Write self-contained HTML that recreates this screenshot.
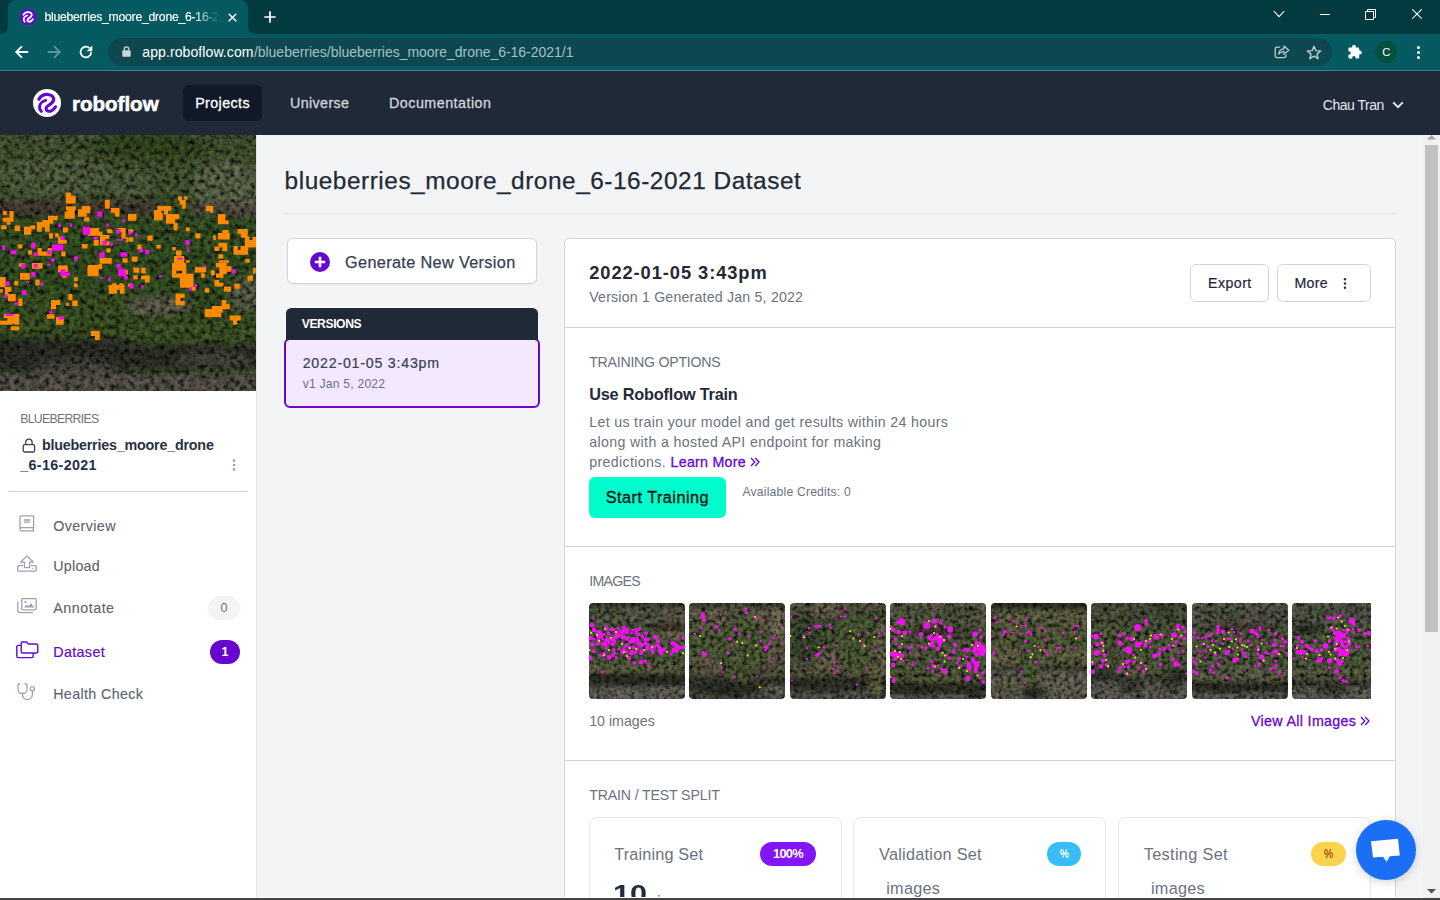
<!DOCTYPE html>
<html lang="en"><head><meta charset="utf-8"><title>blueberries_moore_drone_6-16-2021 Dataset</title>
<style>
*{box-sizing:border-box;margin:0;padding:0}
html,body{width:1440px;height:900px;overflow:hidden;background:#f3f4f6;font-family:"Liberation Sans",sans-serif}
#root{position:relative;width:1440px;height:900px;overflow:hidden;background:#f3f4f6}
.a{position:absolute}
.t{position:absolute;white-space:nowrap;display:block}
svg{position:absolute;overflow:visible}
.hr{position:absolute;height:1px;background:#d1d5db}
.btn{position:absolute;background:#fff;border:1px solid #d1d5db;border-radius:6px}
.card{position:absolute;background:#fff;border:1px solid #e5e7eb;border-radius:8px}
.pill{position:absolute;border-radius:12px;height:24px}
.th{position:absolute;top:603px;width:96px;height:96px;border-radius:4px;overflow:hidden}
</style></head>
<body><div id="root">
<div class="a" style="left:0;top:135px;width:257px;height:765px;background:#fff;border-right:1px solid #e5e7eb"></div>
<svg style="left:0;top:135px" width="256" height="256" viewBox="0 0 256 256"><defs><filter id="pf" x="0" y="0" width="100%" height="100%" color-interpolation-filters="sRGB"><feGaussianBlur in="SourceGraphic" stdDeviation="3.2" result="b"/><feTurbulence type="fractalNoise" baseFrequency="0.2" numOctaves="3" seed="7" result="n"/><feColorMatrix in="n" type="matrix" values="1.3 0 0 0 -0.15  1.3 0.08 0 0 -0.19  1.3 0 0.04 0 -0.17  0 0 0 0 1" result="g0"/><feComponentTransfer in="g0" result="g"><feFuncR type="table" tableValues="0 0.27 0.5 0.63 0.7"/><feFuncG type="table" tableValues="0 0.27 0.5 0.63 0.7"/><feFuncB type="table" tableValues="0 0.27 0.5 0.63 0.7"/></feComponentTransfer><feComposite in="b" in2="g" operator="arithmetic" k1="1.8" k2="0" k3="0" k4="0"/></filter><clipPath id="pc"><rect width="256" height="256"/></clipPath></defs><g clip-path="url(#pc)"><g filter="url(#pf)"><rect x="-20" y="-20" width="296" height="296" fill="#34461f"/><rect x="-20" y="-20" width="296" height="86" fill="#41502e"/><ellipse cx="55" cy="42" rx="60" ry="20" fill="#4d5a3a"/><ellipse cx="228" cy="52" rx="36" ry="26" fill="#566045"/><ellipse cx="150" cy="12" rx="60" ry="14" fill="#33451f"/><ellipse cx="130" cy="48" rx="30" ry="14" fill="#4a5738"/><rect x="-20" y="66" width="190" height="15" fill="#423930"/><rect x="170" y="69" width="100" height="13" fill="#514a3f"/><rect x="-20" y="84" width="296" height="76" fill="#334d21"/><rect x="-20" y="160" width="150" height="42" fill="#384e22"/><ellipse cx="76" cy="82" rx="15" ry="13" fill="#334d21"/><ellipse cx="172" cy="80" rx="20" ry="13" fill="#334d21"/><ellipse cx="214" cy="84" rx="14" ry="8" fill="#334d21"/><ellipse cx="112" cy="84" rx="10" ry="8" fill="#334d21"/><ellipse cx="158" cy="171" rx="34" ry="10" fill="#5b5a49"/><ellipse cx="246" cy="160" rx="16" ry="18" fill="#535842"/><rect x="120" y="184" width="150" height="24" fill="#3a5024"/><rect x="-20" y="204" width="150" height="32" fill="#2a2c24"/><rect x="120" y="210" width="150" height="24" fill="#2b2d25"/><rect x="-20" y="238" width="296" height="40" fill="#524e47"/><ellipse cx="75" cy="232" rx="40" ry="8" fill="#46443d"/><ellipse cx="215" cy="224" rx="40" ry="7" fill="#45433c"/></g><g fill="#ff8a00"><rect x="66.0" y="57.6" width="5.2" height="4.1"/><rect x="66.0" y="61.0" width="5.2" height="4.1"/><rect x="66.0" y="64.4" width="5.2" height="4.1"/><rect x="66.0" y="71.3" width="5.2" height="4.1"/><rect x="70.5" y="61.0" width="5.2" height="4.1"/><rect x="70.5" y="64.4" width="5.2" height="4.1"/><rect x="70.5" y="71.3" width="5.2" height="4.1"/><rect x="64.7" y="76.3" width="3.8" height="4.0"/><rect x="64.7" y="79.7" width="3.8" height="4.0"/><rect x="67.8" y="73.0" width="3.8" height="4.0"/><rect x="67.8" y="76.3" width="3.8" height="4.0"/><rect x="67.8" y="79.7" width="3.8" height="4.0"/><rect x="70.9" y="73.0" width="3.8" height="4.0"/><rect x="70.9" y="76.3" width="3.8" height="4.0"/><rect x="70.9" y="79.7" width="3.8" height="4.0"/><rect x="78.0" y="74.3" width="4.6" height="4.0"/><rect x="78.0" y="77.7" width="4.6" height="4.0"/><rect x="81.9" y="71.0" width="4.6" height="4.0"/><rect x="81.9" y="74.3" width="4.6" height="4.0"/><rect x="81.9" y="77.7" width="4.6" height="4.0"/><rect x="85.7" y="71.0" width="4.6" height="4.0"/><rect x="85.7" y="74.3" width="4.6" height="4.0"/><rect x="84.0" y="82.3" width="5.3" height="4.1" rx="0.7"/><rect x="105.0" y="64.7" width="4.7" height="4.9"/><rect x="105.0" y="68.8" width="4.7" height="4.9"/><rect x="111.0" y="73.0" width="4.6" height="4.7"/><rect x="114.9" y="73.0" width="4.6" height="4.7"/><rect x="114.9" y="77.0" width="4.6" height="4.7"/><rect x="2.8" y="76.0" width="4.0" height="4.0"/><rect x="2.8" y="82.7" width="4.0" height="4.0"/><rect x="6.1" y="82.7" width="4.0" height="4.0"/><rect x="9.5" y="76.0" width="4.0" height="4.0"/><rect x="9.5" y="79.3" width="4.0" height="4.0"/><rect x="9.5" y="82.7" width="4.0" height="4.0"/><rect x="6.7" y="87.0" width="3.8" height="2.8" rx="0.7"/><rect x="1.1" y="90.3" width="5.5" height="4.0" rx="0.7"/><rect x="14.6" y="90.4" width="5.6" height="5.6" rx="0.7"/><rect x="24.0" y="91.7" width="4.0" height="4.4"/><rect x="24.0" y="95.3" width="4.0" height="4.4"/><rect x="27.3" y="91.7" width="4.0" height="4.4"/><rect x="27.3" y="95.3" width="4.0" height="4.4"/><rect x="30.3" y="90.3" width="4.8" height="4.0" rx="0.7"/><rect x="37.0" y="87.0" width="4.7" height="5.2"/><rect x="37.0" y="91.5" width="4.7" height="5.2"/><rect x="41.0" y="87.0" width="4.7" height="5.2"/><rect x="45.0" y="87.0" width="4.7" height="5.2"/><rect x="45.0" y="91.5" width="4.7" height="5.2"/><rect x="42.4" y="84.9" width="6.2" height="3.9" rx="0.7"/><rect x="48.0" y="80.8" width="5.2" height="4.3"/><rect x="48.0" y="84.4" width="5.2" height="4.3"/><rect x="52.5" y="80.8" width="5.2" height="4.3"/><rect x="48.9" y="98.3" width="4.1" height="5.1" rx="0.7"/><rect x="55.1" y="98.2" width="3.7" height="4.0" rx="0.7"/><rect x="62.9" y="92.4" width="5.0" height="5.2" rx="0.7"/><rect x="58.0" y="101.7" width="4.7" height="3.9"/><rect x="58.0" y="104.8" width="4.7" height="3.9"/><rect x="62.0" y="104.8" width="4.7" height="3.9"/><rect x="88.0" y="93.0" width="4.1" height="4.2"/><rect x="88.0" y="96.5" width="4.1" height="4.2"/><rect x="91.4" y="93.0" width="4.1" height="4.2"/><rect x="91.4" y="96.5" width="4.1" height="4.2"/><rect x="94.8" y="93.0" width="4.1" height="4.2"/><rect x="94.8" y="96.5" width="4.1" height="4.2"/><rect x="98.3" y="96.5" width="4.1" height="4.2"/><rect x="107.1" y="94.2" width="5.5" height="4.0" rx="0.7"/><rect x="118.0" y="93.0" width="4.2" height="4.0"/><rect x="121.5" y="93.0" width="4.2" height="4.0"/><rect x="121.5" y="96.3" width="4.2" height="4.0"/><rect x="121.5" y="99.7" width="4.2" height="4.0"/><rect x="100.0" y="100.0" width="5.1" height="3.9"/><rect x="100.0" y="103.2" width="5.1" height="3.9"/><rect x="100.0" y="106.3" width="5.1" height="3.9"/><rect x="104.4" y="100.0" width="5.1" height="3.9"/><rect x="104.4" y="106.3" width="5.1" height="3.9"/><rect x="93.8" y="105.0" width="4.9" height="5.7"/><rect x="81.8" y="109.1" width="5.8" height="4.4" rx="0.7"/><rect x="106.3" y="113.3" width="4.4" height="4.2" rx="0.7"/><rect x="18.1" y="109.3" width="4.4" height="4.2" rx="0.7"/><rect x="28.0" y="115.3" width="4.1" height="4.2" rx="0.7"/><rect x="37.7" y="113.0" width="4.0" height="4.2"/><rect x="37.7" y="116.5" width="4.0" height="4.2"/><rect x="41.0" y="116.5" width="4.0" height="4.2"/><rect x="44.4" y="116.5" width="4.0" height="4.2"/><rect x="47.7" y="113.0" width="4.0" height="4.2"/><rect x="47.7" y="116.5" width="4.0" height="4.2"/><rect x="61.3" y="116.3" width="4.4" height="4.9" rx="0.7"/><rect x="99.6" y="123.0" width="4.5" height="5.7"/><rect x="103.4" y="123.0" width="4.5" height="5.7"/><rect x="107.2" y="123.0" width="4.5" height="5.7"/><rect x="122.4" y="123.3" width="5.3" height="4.4" rx="0.7"/><rect x="126.1" y="102.1" width="1.8" height="5.5" rx="0.7"/><rect x="178.1" y="61.3" width="3.7" height="4.4" rx="0.7"/><rect x="184.2" y="61.2" width="3.3" height="3.5" rx="0.7"/><rect x="179.5" y="65.0" width="3.5" height="4.7"/><rect x="182.2" y="65.0" width="3.5" height="4.7"/><rect x="182.2" y="69.0" width="3.5" height="4.7"/><rect x="154.0" y="75.0" width="4.0" height="4.7"/><rect x="157.3" y="71.0" width="4.0" height="4.7"/><rect x="157.3" y="75.0" width="4.0" height="4.7"/><rect x="160.7" y="71.0" width="4.0" height="4.7"/><rect x="164.0" y="71.0" width="4.0" height="4.7"/><rect x="164.0" y="75.0" width="4.0" height="4.7"/><rect x="167.4" y="71.0" width="4.0" height="4.7"/><rect x="154.0" y="78.0" width="4.7" height="4.0"/><rect x="154.0" y="81.3" width="4.7" height="4.0"/><rect x="158.0" y="78.0" width="4.7" height="4.0"/><rect x="158.0" y="81.3" width="4.7" height="4.0"/><rect x="166.0" y="79.0" width="4.9" height="5.2"/><rect x="166.0" y="83.5" width="4.9" height="5.2"/><rect x="170.2" y="79.0" width="4.9" height="5.2"/><rect x="170.2" y="83.5" width="4.9" height="5.2"/><rect x="174.3" y="79.0" width="4.9" height="5.2"/><rect x="173.5" y="88.0" width="4.0" height="4.0"/><rect x="173.5" y="91.3" width="4.0" height="4.0"/><rect x="206.0" y="70.8" width="4.0" height="5.4"/><rect x="209.3" y="70.8" width="4.0" height="5.4"/><rect x="210.2" y="75.2" width="2.6" height="3.1" rx="0.7"/><rect x="218.0" y="79.0" width="4.0" height="3.9"/><rect x="218.0" y="82.2" width="4.0" height="3.9"/><rect x="218.0" y="85.3" width="4.0" height="3.9"/><rect x="221.3" y="79.0" width="4.0" height="3.9"/><rect x="221.3" y="82.2" width="4.0" height="3.9"/><rect x="221.3" y="85.3" width="4.0" height="3.9"/><rect x="224.7" y="85.3" width="4.0" height="3.9"/><rect x="128.0" y="79.0" width="4.6" height="3.7"/><rect x="128.0" y="82.0" width="4.6" height="3.7"/><rect x="131.9" y="79.0" width="4.6" height="3.7"/><rect x="131.9" y="82.0" width="4.6" height="3.7"/><rect x="185.9" y="92.3" width="3.9" height="3.9" rx="0.7"/><rect x="195.3" y="98.3" width="5.1" height="5.1" rx="0.7"/><rect x="128.3" y="94.2" width="5.0" height="3.5" rx="0.7"/><rect x="128.3" y="102.3" width="5.0" height="4.4" rx="0.7"/><rect x="147.4" y="100.4" width="5.3" height="5.3" rx="0.7"/><rect x="237.5" y="94.0" width="3.9" height="4.7"/><rect x="240.7" y="94.0" width="3.9" height="4.7"/><rect x="240.7" y="98.0" width="3.9" height="4.7"/><rect x="243.8" y="94.0" width="3.9" height="4.7"/><rect x="243.8" y="98.0" width="3.9" height="4.7"/><rect x="218.0" y="98.0" width="4.4" height="3.6"/><rect x="218.0" y="100.9" width="4.4" height="3.6"/><rect x="221.7" y="98.0" width="4.4" height="3.6"/><rect x="221.7" y="100.9" width="4.4" height="3.6"/><rect x="225.3" y="98.0" width="4.4" height="3.6"/><rect x="225.3" y="100.9" width="4.4" height="3.6"/><rect x="222.4" y="94.9" width="6.2" height="3.9" rx="0.7"/><rect x="213.2" y="100.3" width="2.6" height="4.8" rx="0.7"/><rect x="245.0" y="101.7" width="4.4" height="4.0"/><rect x="245.0" y="105.0" width="4.4" height="4.0"/><rect x="245.0" y="108.4" width="4.4" height="4.0"/><rect x="248.7" y="105.0" width="4.4" height="4.0"/><rect x="248.7" y="108.4" width="4.4" height="4.0"/><rect x="252.3" y="101.7" width="4.4" height="4.0"/><rect x="252.3" y="105.0" width="4.4" height="4.0"/><rect x="252.3" y="108.4" width="4.4" height="4.0"/><rect x="233.5" y="111.0" width="4.2" height="4.7"/><rect x="233.5" y="115.0" width="4.2" height="4.7"/><rect x="237.0" y="115.0" width="4.2" height="4.7"/><rect x="240.5" y="111.0" width="4.2" height="4.7"/><rect x="240.5" y="115.0" width="4.2" height="4.7"/><rect x="244.0" y="111.0" width="4.2" height="4.7"/><rect x="244.0" y="115.0" width="4.2" height="4.7"/><rect x="214.5" y="111.6" width="4.7" height="4.5"/><rect x="218.5" y="107.8" width="4.7" height="4.5"/><rect x="218.5" y="119.2" width="4.7" height="4.5"/><rect x="222.4" y="107.8" width="4.7" height="4.5"/><rect x="222.4" y="111.6" width="4.7" height="4.5"/><rect x="137.3" y="109.4" width="4.4" height="5.3" rx="0.7"/><rect x="156.3" y="109.8" width="4.4" height="3.8" rx="0.7"/><rect x="172.1" y="111.9" width="3.7" height="3.3" rx="0.7"/><rect x="176.0" y="115.4" width="5.6" height="5.3" rx="0.7"/><rect x="174.0" y="121.0" width="3.9" height="4.2"/><rect x="174.0" y="124.5" width="3.9" height="4.2"/><rect x="177.2" y="121.0" width="3.9" height="4.2"/><rect x="177.2" y="124.5" width="3.9" height="4.2"/><rect x="180.3" y="121.0" width="3.9" height="4.2"/><rect x="180.3" y="124.5" width="3.9" height="4.2"/><rect x="185.9" y="125.2" width="3.9" height="2.6" rx="0.7"/><rect x="131.9" y="121.4" width="5.7" height="5.3" rx="0.7"/><rect x="218.7" y="125.2" width="10.3" height="2.6" rx="0.7"/><rect x="245.3" y="124.0" width="4.4" height="3.8" rx="0.7"/><rect x="18.9" y="128.2" width="6.2" height="3.5" rx="0.7"/><rect x="32.0" y="128.0" width="4.0" height="5.7"/><rect x="35.3" y="128.0" width="4.0" height="5.7"/><rect x="38.7" y="128.0" width="4.0" height="5.7"/><rect x="58.0" y="130.5" width="5.2" height="3.7"/><rect x="58.0" y="133.5" width="5.2" height="3.7"/><rect x="62.5" y="130.5" width="5.2" height="3.7"/><rect x="62.5" y="133.5" width="5.2" height="3.7"/><rect x="62.3" y="138.3" width="4.4" height="4.4" rx="0.7"/><rect x="87.5" y="130.0" width="4.2" height="4.2"/><rect x="87.5" y="133.5" width="4.2" height="4.2"/><rect x="87.5" y="137.0" width="4.2" height="4.2"/><rect x="91.0" y="130.0" width="4.2" height="4.2"/><rect x="91.0" y="133.5" width="4.2" height="4.2"/><rect x="91.0" y="137.0" width="4.2" height="4.2"/><rect x="94.5" y="130.0" width="4.2" height="4.2"/><rect x="94.5" y="133.5" width="4.2" height="4.2"/><rect x="94.5" y="137.0" width="4.2" height="4.2"/><rect x="98.3" y="129.0" width="3.9" height="5.0" rx="0.7"/><rect x="124.7" y="134.7" width="3.1" height="4.9" rx="0.7"/><rect x="20.0" y="138.0" width="5.2" height="3.7"/><rect x="20.0" y="141.0" width="5.2" height="3.7"/><rect x="24.5" y="138.0" width="5.2" height="3.7"/><rect x="24.5" y="141.0" width="5.2" height="3.7"/><rect x="0.0" y="142.0" width="5.7" height="3.9"/><rect x="0.0" y="145.2" width="5.7" height="3.9"/><rect x="0.0" y="148.3" width="5.7" height="3.9"/><rect x="14.3" y="146.1" width="4.0" height="4.4" rx="0.7"/><rect x="35.3" y="144.4" width="4.4" height="6.0" rx="0.7"/><rect x="74.0" y="142.3" width="3.8" height="4.2" rx="0.7"/><rect x="74.0" y="148.3" width="3.8" height="4.0" rx="0.7"/><rect x="108.8" y="150.0" width="4.5" height="4.7"/><rect x="108.8" y="154.0" width="4.5" height="4.7"/><rect x="112.5" y="150.0" width="4.5" height="4.7"/><rect x="112.5" y="154.0" width="4.5" height="4.7"/><rect x="116.3" y="150.0" width="4.5" height="4.7"/><rect x="120.0" y="150.0" width="4.5" height="4.7"/><rect x="120.0" y="154.0" width="4.5" height="4.7"/><rect x="112.3" y="148.2" width="4.4" height="2.6" rx="0.7"/><rect x="119.3" y="148.3" width="4.4" height="4.4" rx="0.7"/><rect x="0.2" y="153.9" width="2.5" height="3.9" rx="0.7"/><rect x="5.0" y="152.0" width="3.5" height="4.7"/><rect x="5.0" y="156.0" width="3.5" height="4.7"/><rect x="7.8" y="152.0" width="3.5" height="4.7"/><rect x="7.8" y="159.0" width="4.3" height="4.0"/><rect x="7.8" y="162.3" width="4.3" height="4.0"/><rect x="11.4" y="159.0" width="4.3" height="4.0"/><rect x="11.4" y="162.3" width="4.3" height="4.0"/><rect x="18.3" y="163.5" width="4.2" height="7.4" rx="0.7"/><rect x="68.3" y="159.0" width="4.2" height="6.2" rx="0.7"/><rect x="51.0" y="165.0" width="5.0" height="5.0"/><rect x="51.0" y="169.2" width="5.0" height="5.0"/><rect x="55.2" y="165.0" width="5.0" height="5.0"/><rect x="72.2" y="165.4" width="5.5" height="5.6" rx="0.7"/><rect x="66.2" y="167.7" width="2.6" height="3.4" rx="0.7"/><rect x="47.0" y="179.3" width="4.1" height="4.4"/><rect x="50.4" y="179.3" width="4.1" height="4.4"/><rect x="56.0" y="182.0" width="4.2" height="4.2"/><rect x="56.0" y="185.5" width="4.2" height="4.2"/><rect x="59.5" y="182.0" width="4.2" height="4.2"/><rect x="59.5" y="185.5" width="4.2" height="4.2"/><rect x="0.0" y="185.7" width="4.4" height="4.0"/><rect x="3.7" y="179.0" width="4.4" height="4.0"/><rect x="3.7" y="185.7" width="4.4" height="4.0"/><rect x="7.4" y="179.0" width="4.4" height="4.0"/><rect x="7.4" y="182.3" width="4.4" height="4.0"/><rect x="7.4" y="185.7" width="4.4" height="4.0"/><rect x="11.1" y="179.0" width="4.4" height="4.0"/><rect x="11.1" y="182.3" width="4.4" height="4.0"/><rect x="14.8" y="179.0" width="4.4" height="4.0"/><rect x="14.8" y="182.3" width="4.4" height="4.0"/><rect x="14.8" y="185.7" width="4.4" height="4.0"/><rect x="10.7" y="185.0" width="4.6" height="3.9"/><rect x="10.7" y="191.4" width="4.6" height="3.9"/><rect x="14.6" y="191.4" width="4.6" height="3.9"/><rect x="91.0" y="196.0" width="4.7" height="5.0"/><rect x="95.0" y="196.0" width="4.7" height="5.0"/><rect x="95.0" y="200.2" width="4.7" height="5.0"/><rect x="133.4" y="132.4" width="5.9" height="5.3" rx="0.7"/><rect x="141.3" y="132.4" width="4.2" height="6.2" rx="0.7"/><rect x="133.3" y="140.3" width="4.4" height="4.2" rx="0.7"/><rect x="141.0" y="140.5" width="4.7" height="3.9"/><rect x="145.0" y="140.5" width="4.7" height="3.9"/><rect x="145.0" y="143.7" width="4.7" height="3.9"/><rect x="128.2" y="148.2" width="3.1" height="3.5" rx="0.7"/><rect x="172.0" y="128.0" width="4.1" height="4.2"/><rect x="172.0" y="131.5" width="4.1" height="4.2"/><rect x="172.0" y="135.0" width="4.1" height="4.2"/><rect x="172.0" y="138.5" width="4.1" height="4.2"/><rect x="175.4" y="128.0" width="4.1" height="4.2"/><rect x="175.4" y="131.5" width="4.1" height="4.2"/><rect x="175.4" y="138.5" width="4.1" height="4.2"/><rect x="178.8" y="128.0" width="4.1" height="4.2"/><rect x="178.8" y="131.5" width="4.1" height="4.2"/><rect x="178.8" y="138.5" width="4.1" height="4.2"/><rect x="182.2" y="128.0" width="4.1" height="4.2"/><rect x="182.2" y="131.5" width="4.1" height="4.2"/><rect x="182.2" y="135.0" width="4.1" height="4.2"/><rect x="180.0" y="138.7" width="3.9" height="4.0"/><rect x="180.0" y="142.0" width="3.9" height="4.0"/><rect x="180.0" y="145.3" width="3.9" height="4.0"/><rect x="180.0" y="148.7" width="3.9" height="4.0"/><rect x="183.2" y="138.7" width="3.9" height="4.0"/><rect x="183.2" y="142.0" width="3.9" height="4.0"/><rect x="183.2" y="145.3" width="3.9" height="4.0"/><rect x="183.2" y="148.7" width="3.9" height="4.0"/><rect x="186.3" y="138.7" width="3.9" height="4.0"/><rect x="186.3" y="142.0" width="3.9" height="4.0"/><rect x="186.3" y="145.3" width="3.9" height="4.0"/><rect x="186.3" y="148.7" width="3.9" height="4.0"/><rect x="189.5" y="138.7" width="3.9" height="4.0"/><rect x="189.5" y="142.0" width="3.9" height="4.0"/><rect x="189.5" y="145.3" width="3.9" height="4.0"/><rect x="189.5" y="148.7" width="3.9" height="4.0"/><rect x="195.0" y="132.0" width="4.2" height="5.5"/><rect x="198.5" y="132.0" width="4.2" height="5.5"/><rect x="202.0" y="132.0" width="4.2" height="5.5"/><rect x="201.1" y="138.3" width="3.7" height="4.4" rx="0.7"/><rect x="210.8" y="135.3" width="4.0" height="5.1" rx="0.7"/><rect x="216.0" y="128.0" width="4.0" height="4.2"/><rect x="216.0" y="138.5" width="4.0" height="4.2"/><rect x="219.3" y="128.0" width="4.0" height="4.2"/><rect x="219.3" y="131.5" width="4.0" height="4.2"/><rect x="219.3" y="135.0" width="4.0" height="4.2"/><rect x="219.3" y="138.5" width="4.0" height="4.2"/><rect x="222.7" y="128.0" width="4.0" height="4.2"/><rect x="222.7" y="131.5" width="4.0" height="4.2"/><rect x="222.7" y="135.0" width="4.0" height="4.2"/><rect x="226.3" y="131.2" width="5.2" height="5.5" rx="0.7"/><rect x="253.1" y="132.4" width="2.7" height="6.2" rx="0.7"/><rect x="247.4" y="140.4" width="5.7" height="5.3" rx="0.7"/><rect x="214.5" y="144.8" width="4.7" height="3.7"/><rect x="214.5" y="147.8" width="4.7" height="3.7"/><rect x="218.6" y="147.8" width="4.7" height="3.7"/><rect x="234.4" y="148.4" width="5.3" height="5.3" rx="0.7"/><rect x="191.3" y="151.8" width="4.4" height="4.0" rx="0.7"/><rect x="204.8" y="153.3" width="4.3" height="4.4" rx="0.7"/><rect x="224.0" y="151.5" width="3.9" height="5.1"/><rect x="227.2" y="151.5" width="3.9" height="5.1"/><rect x="175.6" y="158.6" width="4.9" height="4.3"/><rect x="175.6" y="162.2" width="4.9" height="4.3"/><rect x="175.6" y="165.9" width="4.9" height="4.3"/><rect x="179.8" y="158.6" width="4.9" height="4.3"/><rect x="179.8" y="165.9" width="4.9" height="4.3"/><rect x="204.8" y="174.0" width="4.6" height="4.4"/><rect x="204.8" y="177.7" width="4.6" height="4.4"/><rect x="208.7" y="174.0" width="4.6" height="4.4"/><rect x="208.7" y="177.7" width="4.6" height="4.4"/><rect x="212.7" y="174.0" width="4.6" height="4.4"/><rect x="212.7" y="177.7" width="4.6" height="4.4"/><rect x="216.6" y="177.7" width="4.6" height="4.4"/><rect x="212.0" y="171.0" width="4.0" height="3.7"/><rect x="215.3" y="171.0" width="4.0" height="3.7"/><rect x="215.3" y="174.0" width="4.0" height="3.7"/><rect x="218.7" y="171.0" width="4.0" height="3.7"/><rect x="218.7" y="174.0" width="4.0" height="3.7"/><rect x="221.7" y="165.0" width="4.4" height="5.0"/><rect x="221.7" y="169.2" width="4.4" height="5.0"/><rect x="225.3" y="169.2" width="4.4" height="5.0"/><rect x="229.7" y="180.6" width="4.1" height="4.9"/><rect x="233.1" y="180.6" width="4.1" height="4.9"/><rect x="233.1" y="184.8" width="4.1" height="4.9"/><rect x="236.6" y="180.6" width="4.1" height="4.9"/></g><g fill="#f60af2"><rect x="97.3" y="76.4" width="5.0" height="5.3" rx="0.7"/><rect x="58.2" y="88.3" width="2.6" height="4.0" rx="0.7"/><rect x="69.9" y="88.3" width="2.5" height="4.0" rx="0.7"/><rect x="106.2" y="88.2" width="2.6" height="3.5" rx="0.7"/><rect x="83.0" y="91.7" width="4.0" height="4.3"/><rect x="83.0" y="95.3" width="4.0" height="4.3"/><rect x="86.3" y="91.7" width="4.0" height="4.3"/><rect x="86.3" y="95.3" width="4.0" height="4.3"/><rect x="116.3" y="94.2" width="4.4" height="4.4" rx="0.7"/><rect x="122.2" y="84.2" width="3.5" height="2.6" rx="0.7"/><rect x="60.3" y="101.2" width="4.4" height="3.5" rx="0.7"/><rect x="93.3" y="101.9" width="4.4" height="2.6" rx="0.7"/><rect x="102.3" y="105.8" width="4.4" height="4.0" rx="0.7"/><rect x="117.0" y="103.9" width="6.3" height="1.9" rx="0.7"/><rect x="31.3" y="107.4" width="4.2" height="6.0" rx="0.7"/><rect x="52.0" y="109.5" width="4.2" height="3.5"/><rect x="52.0" y="112.2" width="4.2" height="3.5"/><rect x="55.5" y="109.5" width="4.2" height="3.5"/><rect x="55.5" y="112.2" width="4.2" height="3.5"/><rect x="59.1" y="109.5" width="4.2" height="3.5"/><rect x="59.1" y="112.2" width="4.2" height="3.5"/><rect x="2.2" y="109.9" width="3.0" height="5.3" rx="0.7"/><rect x="10.4" y="115.3" width="6.0" height="4.0" rx="0.7"/><rect x="33.7" y="117.3" width="3.8" height="4.0" rx="0.7"/><rect x="47.3" y="115.3" width="4.0" height="4.2" rx="0.7"/><rect x="50.8" y="123.2" width="4.0" height="3.5" rx="0.7"/><rect x="74.0" y="121.3" width="3.8" height="4.4" rx="0.7"/><rect x="99.3" y="117.4" width="5.4" height="5.3" rx="0.7"/><rect x="120.5" y="117.3" width="7.0" height="4.4" rx="0.7"/><rect x="110.2" y="107.3" width="2.6" height="4.0" rx="0.7"/><rect x="128.2" y="96.2" width="3.5" height="3.5" rx="0.7"/><rect x="135.2" y="98.2" width="2.4" height="3.3" rx="0.7"/><rect x="185.3" y="105.3" width="4.4" height="4.4" rx="0.7"/><rect x="139.3" y="113.8" width="4.0" height="3.8" rx="0.7"/><rect x="145.1" y="114.8" width="4.2" height="4.4" rx="0.7"/><rect x="187.2" y="113.2" width="2.2" height="3.5" rx="0.7"/><rect x="177.8" y="122.7" width="4.7" height="2.1" rx="0.7"/><rect x="21.3" y="129.0" width="4.0" height="4.7" rx="0.7"/><rect x="33.7" y="129.0" width="3.8" height="3.8" rx="0.7"/><rect x="47.2" y="128.8" width="3.5" height="2.0" rx="0.7"/><rect x="60.5" y="134.4" width="5.0" height="3.8"/><rect x="60.5" y="137.4" width="5.0" height="3.8"/><rect x="64.8" y="137.4" width="5.0" height="3.8"/><rect x="116.3" y="129.0" width="4.4" height="3.8" rx="0.7"/><rect x="118.0" y="133.7" width="4.2" height="4.1"/><rect x="118.0" y="137.1" width="4.2" height="4.1"/><rect x="121.5" y="133.7" width="4.2" height="4.1"/><rect x="121.5" y="137.1" width="4.2" height="4.1"/><rect x="124.1" y="140.8" width="3.7" height="3.8" rx="0.7"/><rect x="99.8" y="142.1" width="3.0" height="1.8" rx="0.7"/><rect x="108.2" y="142.3" width="2.6" height="4.0" rx="0.7"/><rect x="31.3" y="136.8" width="4.2" height="4.8" rx="0.7"/><rect x="5.3" y="146.3" width="4.4" height="4.0" rx="0.7"/><rect x="26.1" y="145.9" width="3.5" height="1.9" rx="0.7"/><rect x="40.0" y="147.8" width="3.2" height="2.6" rx="0.7"/><rect x="21.9" y="155.3" width="4.5" height="4.8" rx="0.7"/><rect x="4.2" y="159.3" width="2.6" height="4.0" rx="0.7"/><rect x="14.3" y="167.2" width="4.0" height="2.6" rx="0.7"/><rect x="49.2" y="175.9" width="3.5" height="2.9" rx="0.7"/><rect x="5.5" y="178.7" width="7.9" height="2.2" rx="0.7"/><rect x="58.4" y="181.2" width="5.3" height="3.2" rx="0.7"/><rect x="231.8" y="134.3" width="4.0" height="4.4" rx="0.7"/><rect x="158.9" y="140.2" width="3.8" height="2.2" rx="0.7"/><rect x="129.7" y="148.4" width="4.0" height="5.3" rx="0.7"/><rect x="141.2" y="149.9" width="2.3" height="3.9" rx="0.7"/><rect x="189.2" y="152.2" width="2.6" height="3.5" rx="0.7"/><rect x="193.9" y="149.2" width="3.3" height="3.1" rx="0.7"/><rect x="202.9" y="130.2" width="2.5" height="2.6" rx="0.7"/></g></g></svg>
<span class="t " style="left:20.20px;top:410.77px;font-size:12.20px;line-height:16px;color:#6b7280;font-weight:400;letter-spacing:-0.643px;">BLUEBERRIES</span>
<svg style="left:22px;top:438px" width="14" height="15" viewBox="0 0 14 15"><rect x="1.2" y="6.6" width="11.4" height="7.4" rx="1.6" fill="none" stroke="#374151" stroke-width="1.3"/><path d="M3.7 6.6 V4.4 A3.2 3.2 0 0 1 10.1 4.4 V6.6" fill="none" stroke="#374151" stroke-width="1.3"/></svg>
<span class="t " style="left:41.90px;top:435.95px;font-size:14.30px;line-height:19px;color:#273142;font-weight:700;letter-spacing:-0.201px;">blueberries_moore_drone</span>
<span class="t " style="left:20.20px;top:455.85px;font-size:14.30px;line-height:19px;color:#273142;font-weight:700;letter-spacing:0.361px;">_6-16-2021</span>
<svg style="left:232px;top:459px" width="4" height="12" viewBox="0 0 4 12"><circle cx="2" cy="1.6" r="1.3" fill="#9ca3af"/><circle cx="2" cy="6" r="1.3" fill="#9ca3af"/><circle cx="2" cy="10.4" r="1.3" fill="#9ca3af"/></svg>
<div class="hr" style="left:8px;top:491px;width:240px;background:#d1d5db"></div>
<svg style="left:19px;top:515px" width="16" height="17" viewBox="0 0 16 17"><path d="M1 13.6 V2.4 A1.6 1.6 0 0 1 2.6 0.8 H14.6 V12.6 H2.7 A1.65 1.65 0 0 0 2.7 15.9 H15" fill="none" stroke="#9ca3af" stroke-width="1.3"/><path d="M14.3 12.6 V15.9" stroke="#9ca3af" stroke-width="1.3"/><path d="M4.8 5 H11.4 M4.8 7.2 H11.4" stroke="#9ca3af" stroke-width="1.3"/></svg>
<span class="t " style="left:53.20px;top:517.05px;font-size:14.30px;line-height:19px;color:#59636f;font-weight:400;letter-spacing:0.386px;-webkit-text-stroke:0.12px #59636f;">Overview</span>
<svg style="left:17px;top:555px" width="20" height="17" viewBox="0 0 20 17"><path d="M6 10.6 H1.9 A1.2 1.2 0 0 0 0.7 11.8 V15 A1.2 1.2 0 0 0 1.9 16.2 H18.1 A1.2 1.2 0 0 0 19.3 15 V11.8 A1.2 1.2 0 0 0 18.1 10.6 H14" fill="none" stroke="#9ca3af" stroke-width="1.3"/><path d="M10 0.9 L3.6 7.2 H7.4 V12.6 H12.6 V7.2 H16.4 Z" fill="none" stroke="#9ca3af" stroke-width="1.3" stroke-linejoin="round"/><circle cx="16" cy="13.5" r="0.8" fill="#9ca3af"/></svg>
<span class="t " style="left:53.20px;top:557.05px;font-size:14.30px;line-height:19px;color:#59636f;font-weight:400;letter-spacing:0.256px;-webkit-text-stroke:0.12px #59636f;">Upload</span>
<svg style="left:17px;top:598px" width="20" height="16" viewBox="0 0 20 16"><rect x="4.7" y="0.7" width="14.5" height="11.2" rx="1.4" fill="none" stroke="#9ca3af" stroke-width="1.3"/><path d="M0.8 3.4 V12.8 A1.8 1.8 0 0 0 2.6 14.6 H16" fill="none" stroke="#9ca3af" stroke-width="1.3"/><path d="M7 9.6 L10 6.6 L11.6 8.2 L14 5 L17.2 9.6 Z" fill="#9ca3af"/><circle cx="8.4" cy="4" r="1.1" fill="#9ca3af"/></svg>
<span class="t " style="left:53.20px;top:598.55px;font-size:14.30px;line-height:19px;color:#59636f;font-weight:400;letter-spacing:0.521px;-webkit-text-stroke:0.12px #59636f;">Annotate</span>
<div class="pill" style="left:208px;top:596px;width:32px;background:#f3f4f6"></div>
<span class="t " style="left:220.50px;top:599.83px;font-size:12.60px;line-height:16px;color:#6b7280;font-weight:400;">0</span>
<svg style="left:15.5px;top:641px" width="23" height="18" viewBox="0 0 23 18"><path d="M5.8 1 H10.4 L12.4 3 H20.2 A1.6 1.6 0 0 1 21.8 4.6 V10.4 A1.6 1.6 0 0 1 20.2 12 H6.8 A1.6 1.6 0 0 1 5.2 10.4 V2.6 A1.6 1.6 0 0 1 6.8 1 Z" fill="none" stroke="#6706ce" stroke-width="1.4" stroke-linejoin="round"/><path d="M5 4.4 H2.4 A1.6 1.6 0 0 0 0.8 6 V15 A1.6 1.6 0 0 0 2.4 16.6 H15.6 A1.6 1.6 0 0 0 17.2 15 V12.2" fill="none" stroke="#6706ce" stroke-width="1.4"/></svg>
<span class="t " style="left:53.20px;top:642.85px;font-size:14.30px;line-height:19px;color:#6706ce;font-weight:400;letter-spacing:0.370px;-webkit-text-stroke:0.20px #6706ce;">Dataset</span>
<div class="pill" style="left:210px;top:640px;width:30px;background:#6706ce"></div>
<span class="t " style="left:221.50px;top:643.83px;font-size:12.60px;line-height:16px;color:#ffffff;font-weight:700;">1</span>
<svg style="left:17px;top:683px" width="19" height="18" viewBox="0 0 19 18"><path d="M3.2 1 H1.8 A0.8 0.8 0 0 0 1 1.8 V6 A4.5 4.5 0 0 0 10 6 V1.8 A0.8 0.8 0 0 0 9.2 1 H7.6" fill="none" stroke="#9ca3af" stroke-width="1.3"/><path d="M5.4 10.6 V11.6 A5 5 0 0 0 15.4 11.6 V8" fill="none" stroke="#9ca3af" stroke-width="1.3"/><circle cx="15.4" cy="5.8" r="2.1" fill="none" stroke="#9ca3af" stroke-width="1.3"/></svg>
<span class="t " style="left:53.20px;top:684.55px;font-size:14.30px;line-height:19px;color:#59636f;font-weight:400;letter-spacing:0.360px;-webkit-text-stroke:0.12px #59636f;">Health Check</span>
<span class="t " style="left:284.60px;top:165.15px;font-size:24.40px;line-height:32px;color:#1f2937;font-weight:400;letter-spacing:0.532px;-webkit-text-stroke:0.25px #1f2937;">blueberries_moore_drone_6-16-2021 Dataset</span>
<div class="hr" style="left:284px;top:213px;width:1112px;background:#e0e2e6"></div>
<div class="btn" style="left:287px;top:238px;width:250px;height:46px;box-shadow:0 1px 2px rgba(0,0,0,.05)"></div>
<svg style="left:310px;top:251.5px" width="20" height="20" viewBox="0 0 20 20"><circle cx="10" cy="10" r="10" fill="#6706ce"/><path d="M10 4.8 V15.2 M4.8 10 H15.2" stroke="#fff" stroke-width="2.6" fill="none"/></svg>
<span class="t " style="left:345.00px;top:251.95px;font-size:16.30px;line-height:21px;color:#374151;font-weight:400;letter-spacing:0.337px;-webkit-text-stroke:0.25px #374151;">Generate New Version</span>
<div class="a" style="left:284px;top:338px;width:256px;height:70px;background:#f3e8ff;border:2px solid #6706ce;border-radius:6px"></div>
<div class="a" style="left:286px;top:307px;width:252px;height:33px;background:#1f2937;border-radius:6px 6px 0 0;border-top:1px solid #fff"></div>
<span class="t " style="left:301.70px;top:315.87px;font-size:12.20px;line-height:16px;color:#ffffff;font-weight:700;letter-spacing:-0.436px;">VERSIONS</span>
<span class="t " style="left:302.70px;top:354.18px;font-size:14.20px;line-height:18px;color:#374151;font-weight:400;letter-spacing:0.784px;-webkit-text-stroke:0.20px #374151;">2022-01-05 3:43pm</span>
<span class="t " style="left:302.70px;top:375.67px;font-size:12.20px;line-height:16px;color:#6b7280;font-weight:400;letter-spacing:0.189px;">v1 Jan 5, 2022</span>
<div class="a" style="left:564px;top:238px;width:832px;height:700px;background:#fff;border:1px solid #d1d5db;border-radius:5px"></div>
<span class="t " style="left:589.20px;top:260.66px;font-size:18.30px;line-height:24px;color:#1f2937;font-weight:700;letter-spacing:0.933px;">2022-01-05 3:43pm</span>
<span class="t " style="left:589.20px;top:287.98px;font-size:14.20px;line-height:18px;color:#6b7280;font-weight:400;letter-spacing:0.186px;">Version 1 Generated Jan 5, 2022</span>
<div class="btn" style="left:1190px;top:264px;width:79px;height:38px"></div>
<span class="t " style="left:1208.00px;top:274.08px;font-size:14.20px;line-height:18px;color:#1f2937;font-weight:400;letter-spacing:0.452px;-webkit-text-stroke:0.20px #1f2937;">Export</span>
<div class="btn" style="left:1277px;top:264px;width:94px;height:38px"></div>
<span class="t " style="left:1294.40px;top:274.08px;font-size:14.20px;line-height:18px;color:#1f2937;font-weight:400;letter-spacing:0.282px;-webkit-text-stroke:0.20px #1f2937;">More</span>
<svg style="left:1343px;top:277.5px" width="4" height="11" viewBox="0 0 4 11"><circle cx="2" cy="1.3" r="1.2" fill="#1f2937"/><circle cx="2" cy="5.5" r="1.2" fill="#1f2937"/><circle cx="2" cy="9.7" r="1.2" fill="#1f2937"/></svg>
<div class="hr" style="left:565px;top:327px;width:830px"></div>
<span class="t " style="left:589.20px;top:353.18px;font-size:14.20px;line-height:18px;color:#6b7280;font-weight:400;letter-spacing:-0.273px;">TRAINING OPTIONS</span>
<span class="t " style="left:589.20px;top:383.87px;font-size:16.25px;line-height:21px;color:#1f2937;font-weight:700;letter-spacing:-0.181px;">Use Roboflow Train</span>
<span class="t " style="left:589.20px;top:412.98px;font-size:14.20px;line-height:18px;color:#6b7280;font-weight:400;letter-spacing:0.333px;">Let us train your model and get results within 24 hours</span>
<span class="t " style="left:589.20px;top:432.88px;font-size:14.20px;line-height:18px;color:#6b7280;font-weight:400;letter-spacing:0.355px;">along with a hosted API endpoint for making</span>
<span class="t " style="left:589.20px;top:452.78px;font-size:14.20px;line-height:18px;color:#6b7280;font-weight:400;letter-spacing:0.362px;">predictions.</span>
<span class="t " style="left:670.60px;top:452.78px;font-size:14.20px;line-height:18px;color:#6706ce;font-weight:400;letter-spacing:0.265px;-webkit-text-stroke:0.30px #6706ce;">Learn More</span>
<svg style="left:750px;top:457px" width="10" height="10" viewBox="0 0 10 10"><path d="M1 1 L4.8 5 L1 9 M5.2 1 L9 5 L5.2 9" stroke="#6706ce" stroke-width="1.3" fill="none"/></svg>
<div class="a" style="left:589px;top:477px;width:137px;height:41px;border-radius:6px;background:#00fccd"></div>
<span class="t " style="left:605.80px;top:487.17px;font-size:16.25px;line-height:21px;color:#0b1512;font-weight:400;letter-spacing:0.473px;-webkit-text-stroke:0.35px #0b1512;">Start Training</span>
<span class="t " style="left:742.50px;top:484.17px;font-size:12.20px;line-height:16px;color:#6b7280;font-weight:400;letter-spacing:0.180px;">Available Credits: 0</span>
<div class="hr" style="left:565px;top:546px;width:830px"></div>
<span class="t " style="left:589.20px;top:572.08px;font-size:14.20px;line-height:18px;color:#6b7280;font-weight:400;letter-spacing:-0.727px;">IMAGES</span>
<svg width="0" height="0" style="left:0;top:0"><defs><filter id="tf0" x="0" y="0" width="96" height="96" color-interpolation-filters="sRGB" filterUnits="userSpaceOnUse"><feGaussianBlur in="SourceGraphic" stdDeviation="2.2" result="b"/><feTurbulence type="fractalNoise" baseFrequency="0.24" numOctaves="3" seed="4" result="n"/><feColorMatrix in="n" type="matrix" values="1.3 0 0 0 -0.15  1.3 0.08 0 0 -0.19  1.3 0 0.04 0 -0.17  0 0 0 0 1" result="g0"/><feComponentTransfer in="g0" result="g"><feFuncR type="table" tableValues="0 0.27 0.5 0.63 0.7"/><feFuncG type="table" tableValues="0 0.27 0.5 0.63 0.7"/><feFuncB type="table" tableValues="0 0.27 0.5 0.63 0.7"/></feComponentTransfer><feComposite in="b" in2="g" operator="arithmetic" k1="1.8" k2="0" k3="0" k4="0"/></filter><filter id="tf1" x="0" y="0" width="96" height="96" color-interpolation-filters="sRGB" filterUnits="userSpaceOnUse"><feGaussianBlur in="SourceGraphic" stdDeviation="2.2" result="b"/><feTurbulence type="fractalNoise" baseFrequency="0.24" numOctaves="3" seed="9" result="n"/><feColorMatrix in="n" type="matrix" values="1.3 0 0 0 -0.15  1.3 0.08 0 0 -0.19  1.3 0 0.04 0 -0.17  0 0 0 0 1" result="g0"/><feComponentTransfer in="g0" result="g"><feFuncR type="table" tableValues="0 0.27 0.5 0.63 0.7"/><feFuncG type="table" tableValues="0 0.27 0.5 0.63 0.7"/><feFuncB type="table" tableValues="0 0.27 0.5 0.63 0.7"/></feComponentTransfer><feComposite in="b" in2="g" operator="arithmetic" k1="1.8" k2="0" k3="0" k4="0"/></filter><filter id="tf2" x="0" y="0" width="96" height="96" color-interpolation-filters="sRGB" filterUnits="userSpaceOnUse"><feGaussianBlur in="SourceGraphic" stdDeviation="2.2" result="b"/><feTurbulence type="fractalNoise" baseFrequency="0.24" numOctaves="3" seed="15" result="n"/><feColorMatrix in="n" type="matrix" values="1.3 0 0 0 -0.15  1.3 0.08 0 0 -0.19  1.3 0 0.04 0 -0.17  0 0 0 0 1" result="g0"/><feComponentTransfer in="g0" result="g"><feFuncR type="table" tableValues="0 0.27 0.5 0.63 0.7"/><feFuncG type="table" tableValues="0 0.27 0.5 0.63 0.7"/><feFuncB type="table" tableValues="0 0.27 0.5 0.63 0.7"/></feComponentTransfer><feComposite in="b" in2="g" operator="arithmetic" k1="1.8" k2="0" k3="0" k4="0"/></filter><filter id="tf3" x="0" y="0" width="96" height="96" color-interpolation-filters="sRGB" filterUnits="userSpaceOnUse"><feGaussianBlur in="SourceGraphic" stdDeviation="2.2" result="b"/><feTurbulence type="fractalNoise" baseFrequency="0.24" numOctaves="3" seed="23" result="n"/><feColorMatrix in="n" type="matrix" values="1.3 0 0 0 -0.15  1.3 0.08 0 0 -0.19  1.3 0 0.04 0 -0.17  0 0 0 0 1" result="g0"/><feComponentTransfer in="g0" result="g"><feFuncR type="table" tableValues="0 0.27 0.5 0.63 0.7"/><feFuncG type="table" tableValues="0 0.27 0.5 0.63 0.7"/><feFuncB type="table" tableValues="0 0.27 0.5 0.63 0.7"/></feComponentTransfer><feComposite in="b" in2="g" operator="arithmetic" k1="1.8" k2="0" k3="0" k4="0"/></filter></defs></svg>
<div class="a" style="left:589px;top:603px;width:782px;height:96px;overflow:hidden">
<div class="th" style="left:0px;top:0"><svg style="left:0;top:0" width="96" height="96" viewBox="0 0 96 96"><g filter="url(#tf0)"><rect x="-12" y="-12" width="120" height="120" fill="#38392e"/><rect x="-12" y="-12.0" width="120" height="16.0" fill="#38392e"/><rect x="-12" y="4.0" width="120" height="16.0" fill="#585647"/><rect x="-12" y="20.0" width="120" height="40.0" fill="#475538"/><rect x="-12" y="60.0" width="120" height="11.0" fill="#55593b"/><rect x="-12" y="71.0" width="120" height="12.0" fill="#2b2c24"/><rect x="-12" y="83.0" width="120" height="25.0" fill="#605d55"/><ellipse cx="80.0" cy="24.0" rx="20.0" ry="4.0" fill="#3d352c"/><ellipse cx="82.0" cy="33.0" rx="16.0" ry="6.0" fill="#625c48"/><ellipse cx="20.0" cy="10.0" rx="16.0" ry="6.0" fill="#4a513a"/><ellipse cx="60.0" cy="12.0" rx="14.0" ry="5.0" fill="#4f5240"/><ellipse cx="30.0" cy="88.0" rx="30.0" ry="5.0" fill="#5e5c54"/><ellipse cx="75.0" cy="76.0" rx="20.0" ry="4.0" fill="#2a2b23"/></g><g fill="#f411f0"><circle cx="13.5" cy="69.0" r="1.6"/><circle cx="60.0" cy="63.0" r="1.6"/><circle cx="52.0" cy="59.0" r="2.2"/><circle cx="56.0" cy="58.0" r="1.8"/><circle cx="3.0" cy="22.0" r="2.5"/><circle cx="5.0" cy="27.0" r="2.2"/><circle cx="9.0" cy="29.0" r="2.2"/><circle cx="17.0" cy="24.0" r="1.8"/><circle cx="35.0" cy="25.0" r="2.2"/><circle cx="38.0" cy="29.0" r="2.2"/><circle cx="50.0" cy="26.0" r="2.0"/><circle cx="57.0" cy="30.0" r="2.0"/><circle cx="66.0" cy="34.0" r="2.3"/><circle cx="69.0" cy="38.0" r="2.0"/><circle cx="94.0" cy="35.0" r="1.8"/><circle cx="95.0" cy="44.0" r="2.0"/><circle cx="89.0" cy="45.0" r="2.0"/><circle cx="86.0" cy="42.0" r="1.8"/><circle cx="75.0" cy="46.0" r="1.8"/><circle cx="72.0" cy="49.0" r="2.2"/><circle cx="82.0" cy="51.0" r="1.6"/><circle cx="1.0" cy="55.0" r="2.4"/><circle cx="0.5" cy="64.0" r="1.2"/><circle cx="45.0" cy="60.0" r="1.8"/><circle cx="40.0" cy="55.0" r="2.0"/><circle cx="42.7" cy="48.6" r="2.0"/><circle cx="22.7" cy="26.8" r="1.7"/><circle cx="37.0" cy="28.9" r="1.3"/><circle cx="23.5" cy="41.0" r="2.2"/><circle cx="47.0" cy="37.0" r="1.5"/><circle cx="31.6" cy="32.8" r="1.4"/><circle cx="36.9" cy="48.7" r="1.9"/><circle cx="43.9" cy="38.3" r="2.3"/><circle cx="2.3" cy="34.8" r="2.1"/><circle cx="43.3" cy="50.9" r="1.3"/><circle cx="49.5" cy="40.4" r="2.1"/><circle cx="17.6" cy="37.2" r="2.1"/><circle cx="42.9" cy="36.0" r="1.7"/><circle cx="10.9" cy="28.4" r="1.3"/><circle cx="1.2" cy="34.8" r="1.9"/><circle cx="24.4" cy="26.2" r="1.8"/><circle cx="24.1" cy="51.9" r="1.8"/><circle cx="14.2" cy="52.3" r="1.6"/><circle cx="3.1" cy="41.4" r="2.1"/><circle cx="49.3" cy="31.8" r="1.5"/><circle cx="47.0" cy="27.5" r="2.0"/><circle cx="32.4" cy="28.6" r="1.7"/><circle cx="19.7" cy="37.0" r="1.9"/><circle cx="38.1" cy="35.0" r="2.0"/><circle cx="27.1" cy="34.6" r="1.3"/><circle cx="18.0" cy="35.8" r="1.5"/><circle cx="11.9" cy="31.1" r="2.0"/><circle cx="13.7" cy="36.2" r="1.2"/><circle cx="40.3" cy="44.6" r="1.8"/><circle cx="27.4" cy="32.8" r="1.6"/><circle cx="48.1" cy="36.1" r="2.0"/><circle cx="11.5" cy="31.2" r="1.7"/><circle cx="5.1" cy="36.3" r="1.4"/><circle cx="38.7" cy="25.7" r="1.3"/><circle cx="35.0" cy="47.6" r="1.3"/><circle cx="45.8" cy="49.9" r="1.3"/><circle cx="57.5" cy="46.3" r="1.6"/><circle cx="9.3" cy="37.2" r="1.6"/><circle cx="16.9" cy="42.0" r="1.8"/><circle cx="29.9" cy="46.1" r="1.4"/><circle cx="4.5" cy="48.0" r="1.9"/><circle cx="49.5" cy="38.8" r="1.5"/><circle cx="26.7" cy="33.2" r="2.3"/><circle cx="17.5" cy="45.3" r="1.5"/><circle cx="19.9" cy="54.6" r="2.3"/><circle cx="16.1" cy="37.2" r="1.2"/><circle cx="44.8" cy="44.2" r="1.9"/><circle cx="9.9" cy="29.5" r="2.1"/><circle cx="14.7" cy="50.5" r="1.7"/><circle cx="28.2" cy="33.2" r="2.3"/><circle cx="54.1" cy="41.8" r="1.6"/><circle cx="33.7" cy="34.2" r="2.2"/><circle cx="56.6" cy="40.3" r="2.0"/><circle cx="17.1" cy="39.7" r="1.6"/><circle cx="16.5" cy="42.4" r="1.4"/><circle cx="42.6" cy="30.1" r="1.5"/><circle cx="12.6" cy="31.0" r="1.3"/><circle cx="9.6" cy="33.8" r="1.3"/><circle cx="21.0" cy="54.1" r="1.8"/><circle cx="33.3" cy="49.9" r="1.7"/><circle cx="22.5" cy="25.7" r="1.3"/><circle cx="49.7" cy="43.1" r="1.2"/><circle cx="35.7" cy="44.3" r="1.3"/><circle cx="23.2" cy="36.5" r="1.8"/><circle cx="41.4" cy="38.7" r="2.0"/><circle cx="19.0" cy="36.7" r="2.2"/><circle cx="28.4" cy="30.2" r="2.2"/><circle cx="52.5" cy="48.9" r="2.1"/><circle cx="52.1" cy="50.2" r="2.1"/><circle cx="44.1" cy="35.7" r="2.0"/><circle cx="33.4" cy="30.7" r="1.2"/><circle cx="52.0" cy="41.0" r="1.8"/><circle cx="47.4" cy="49.0" r="1.3"/><circle cx="8.1" cy="41.6" r="1.4"/><circle cx="58.2" cy="44.5" r="2.1"/><circle cx="25.5" cy="38.6" r="1.8"/><circle cx="56.4" cy="36.8" r="2.0"/><circle cx="52.8" cy="43.0" r="1.5"/><circle cx="33.2" cy="39.9" r="1.4"/><circle cx="37.8" cy="36.2" r="1.5"/><circle cx="19.9" cy="54.1" r="2.0"/><circle cx="42.4" cy="37.2" r="1.3"/><circle cx="15.0" cy="51.7" r="1.9"/><circle cx="54.0" cy="34.6" r="1.3"/><circle cx="24.4" cy="46.6" r="1.5"/><circle cx="19.7" cy="30.8" r="2.0"/><circle cx="59.4" cy="41.5" r="1.4"/><circle cx="28.7" cy="25.3" r="1.2"/><circle cx="0.5" cy="35.8" r="1.2"/><circle cx="9.8" cy="40.2" r="1.6"/><circle cx="34.5" cy="46.4" r="1.5"/><circle cx="33.4" cy="48.5" r="2.2"/><circle cx="45.0" cy="37.4" r="1.2"/><circle cx="27.1" cy="54.7" r="1.4"/><circle cx="25.0" cy="35.9" r="1.6"/><circle cx="41.8" cy="51.0" r="1.6"/><circle cx="33.3" cy="28.6" r="1.6"/><circle cx="58.1" cy="42.0" r="1.2"/><circle cx="-0.8" cy="40.1" r="2.1"/><circle cx="11.6" cy="52.2" r="1.5"/><circle cx="9.5" cy="34.1" r="2.0"/><circle cx="25.3" cy="49.8" r="1.6"/><circle cx="53.2" cy="33.3" r="1.6"/><circle cx="33.6" cy="27.6" r="1.5"/><circle cx="20.3" cy="40.0" r="1.4"/><circle cx="37.8" cy="42.1" r="1.9"/><circle cx="43.6" cy="27.2" r="1.4"/><circle cx="47.0" cy="37.0" r="2.0"/><circle cx="12.3" cy="33.8" r="2.0"/><circle cx="50.0" cy="31.5" r="1.8"/><circle cx="47.2" cy="29.4" r="1.6"/><circle cx="49.5" cy="38.7" r="1.2"/><circle cx="59.3" cy="36.5" r="1.8"/><circle cx="30.1" cy="26.7" r="1.3"/><circle cx="36.9" cy="27.8" r="2.3"/><circle cx="13.8" cy="41.1" r="2.0"/><circle cx="2.6" cy="35.1" r="1.2"/><circle cx="18.2" cy="26.0" r="1.4"/><circle cx="48.3" cy="46.1" r="1.9"/><circle cx="14.7" cy="31.4" r="1.6"/><circle cx="68.0" cy="42.2" r="1.8"/><circle cx="63.8" cy="50.0" r="1.4"/><circle cx="63.2" cy="45.2" r="2.1"/><circle cx="69.9" cy="42.9" r="1.7"/><circle cx="70.3" cy="47.0" r="1.7"/><circle cx="63.5" cy="48.3" r="1.5"/><circle cx="71.7" cy="50.2" r="1.9"/><circle cx="62.6" cy="46.2" r="1.7"/><circle cx="71.8" cy="50.8" r="1.6"/><circle cx="75.0" cy="47.5" r="1.3"/><circle cx="65.1" cy="43.4" r="2.0"/><circle cx="72.9" cy="46.5" r="2.1"/><circle cx="70.3" cy="44.6" r="1.7"/><circle cx="72.1" cy="49.5" r="1.8"/><circle cx="84.7" cy="46.4" r="2.0"/><circle cx="86.9" cy="42.2" r="1.8"/><circle cx="88.2" cy="42.9" r="2.0"/><circle cx="92.5" cy="44.5" r="1.6"/><circle cx="89.9" cy="44.2" r="1.9"/><circle cx="87.5" cy="48.3" r="1.4"/><circle cx="82.9" cy="40.1" r="2.0"/><circle cx="83.4" cy="48.4" r="1.6"/><circle cx="87.2" cy="47.8" r="2.3"/><circle cx="85.1" cy="46.1" r="1.8"/><circle cx="84.0" cy="40.1" r="2.0"/><circle cx="85.9" cy="40.6" r="1.7"/></g><g fill="#e6ee1c"><circle cx="2.0" cy="30.0" r="1.1"/><circle cx="8.0" cy="32.0" r="1.1"/><circle cx="16.0" cy="26.0" r="1.1"/><circle cx="10.0" cy="38.0" r="1.1"/><circle cx="22.0" cy="35.0" r="1.1"/><circle cx="27.0" cy="29.0" r="1.1"/><circle cx="20.0" cy="47.0" r="1.1"/><circle cx="35.0" cy="49.0" r="1.1"/><circle cx="38.0" cy="53.0" r="1.1"/><circle cx="47.0" cy="46.0" r="1.1"/><circle cx="55.0" cy="47.0" r="1.1"/><circle cx="63.0" cy="44.0" r="1.1"/><circle cx="78.0" cy="49.0" r="1.1"/><circle cx="94.0" cy="50.0" r="1.1"/><circle cx="0.5" cy="47.0" r="1.1"/><circle cx="41.0" cy="45.0" r="1.1"/><circle cx="33.0" cy="41.0" r="1.1"/><circle cx="15.0" cy="52.0" r="1.1"/></g></svg></div>
<div class="th" style="left:100px;top:0"><svg style="left:0;top:0" width="96" height="96" viewBox="0 0 96 96"><g filter="url(#tf1)"><rect x="-12" y="-12" width="120" height="120" fill="#424438"/><rect x="-12" y="-12.0" width="120" height="18.0" fill="#424438"/><rect x="-12" y="6.0" width="120" height="16.0" fill="#615b48"/><rect x="-12" y="22.0" width="120" height="40.0" fill="#585441"/><rect x="-12" y="62.0" width="120" height="12.0" fill="#51503d"/><rect x="-12" y="74.0" width="120" height="14.0" fill="#34352b"/><rect x="-12" y="88.0" width="120" height="20.0" fill="#4b483e"/><ellipse cx="52.0" cy="42.0" rx="30.0" ry="26.0" fill="#495733"/><ellipse cx="8.0" cy="36.0" rx="12.0" ry="20.0" fill="#495733"/><ellipse cx="50.0" cy="10.0" rx="16.0" ry="8.0" fill="#53563d"/><ellipse cx="52.0" cy="70.0" rx="16.0" ry="10.0" fill="#475131"/><ellipse cx="40.0" cy="86.0" rx="30.0" ry="7.0" fill="#2a2b23"/><ellipse cx="85.0" cy="88.0" rx="12.0" ry="6.0" fill="#5e5c54"/><ellipse cx="20.0" cy="60.0" rx="10.0" ry="6.0" fill="#625c48"/><ellipse cx="88.0" cy="22.0" rx="8.0" ry="12.0" fill="#6e6854"/></g><g fill="#f411f0"><circle cx="13.5" cy="11.8" r="2.4"/><circle cx="14.9" cy="16.7" r="2.2"/><circle cx="56.7" cy="6.0" r="1.6"/><circle cx="57.4" cy="9.6" r="1.6"/><circle cx="68.0" cy="15.3" r="1.6"/><circle cx="27.6" cy="23.8" r="1.8"/><circle cx="12.0" cy="25.0" r="1.6"/><circle cx="5.7" cy="30.9" r="1.4"/><circle cx="46.0" cy="26.0" r="1.8"/><circle cx="50.3" cy="30.9" r="1.4"/><circle cx="71.5" cy="28.8" r="1.4"/><circle cx="60.2" cy="33.0" r="1.2"/><circle cx="41.0" cy="35.8" r="1.8"/><circle cx="43.2" cy="41.5" r="1.3"/><circle cx="84.3" cy="35.0" r="1.6"/><circle cx="80.7" cy="40.8" r="1.6"/><circle cx="77.2" cy="44.3" r="2.0"/><circle cx="72.2" cy="38.0" r="1.3"/><circle cx="39.0" cy="50.0" r="1.4"/><circle cx="15.6" cy="51.4" r="2.3"/><circle cx="32.6" cy="64.6" r="1.3"/><circle cx="31.2" cy="72.0" r="1.1"/><circle cx="45.3" cy="74.0" r="1.5"/><circle cx="68.0" cy="73.4" r="1.1"/><circle cx="82.9" cy="59.0" r="1.1"/><circle cx="85.0" cy="55.0" r="1.1"/><circle cx="30.5" cy="27.3" r="1.2"/><circle cx="76.5" cy="47.0" r="1.5"/><circle cx="14.0" cy="49.0" r="1.3"/></g><g fill="#e6ee1c"><circle cx="48.2" cy="38.7" r="1.1"/><circle cx="53.1" cy="40.0" r="1.1"/><circle cx="67.3" cy="42.5" r="1.1"/><circle cx="58.8" cy="52.5" r="1.1"/><circle cx="70.8" cy="84.3" r="1.1"/><circle cx="11.0" cy="33.0" r="1.1"/><circle cx="66.0" cy="14.0" r="1.1"/><circle cx="32.0" cy="60.0" r="1.1"/></g></svg></div>
<div class="th" style="left:201px;top:0"><svg style="left:0;top:0" width="96" height="96" viewBox="0 0 96 96"><g filter="url(#tf2)"><rect x="-12" y="-12" width="120" height="120" fill="#53503d"/><rect x="-12" y="-12.0" width="120" height="20.0" fill="#53503d"/><rect x="-12" y="8.0" width="120" height="50.0" fill="#434d31"/><rect x="-12" y="58.0" width="120" height="16.0" fill="#55543c"/><rect x="-12" y="74.0" width="120" height="14.0" fill="#2e2f27"/><rect x="-12" y="88.0" width="120" height="20.0" fill="#514f48"/><ellipse cx="36.0" cy="8.0" rx="14.0" ry="8.0" fill="#625c48"/><ellipse cx="92.0" cy="45.0" rx="6.0" ry="28.0" fill="#625c48"/><ellipse cx="40.0" cy="56.0" rx="18.0" ry="7.0" fill="#625c48"/><ellipse cx="14.0" cy="40.0" rx="14.0" ry="26.0" fill="#38442c"/><ellipse cx="66.0" cy="40.0" rx="20.0" ry="30.0" fill="#495733"/><ellipse cx="86.0" cy="82.0" rx="8.0" ry="10.0" fill="#565939"/><ellipse cx="8.0" cy="66.0" rx="10.0" ry="6.0" fill="#55553d"/></g><g fill="#f411f0"><circle cx="55.0" cy="6.0" r="1.2"/><circle cx="51.0" cy="13.6" r="1.4"/><circle cx="54.5" cy="13.6" r="1.4"/><circle cx="85.7" cy="15.3" r="1.2"/><circle cx="27.6" cy="23.5" r="1.6"/><circle cx="30.0" cy="23.5" r="1.4"/><circle cx="25.0" cy="23.5" r="1.2"/><circle cx="19.0" cy="25.0" r="1.3"/><circle cx="19.5" cy="29.7" r="1.2"/><circle cx="13.5" cy="33.0" r="1.3"/><circle cx="40.0" cy="22.0" r="1.2"/><circle cx="89.0" cy="30.0" r="1.3"/><circle cx="68.7" cy="30.9" r="1.1"/><circle cx="78.0" cy="30.0" r="1.1"/><circle cx="34.0" cy="44.0" r="1.5"/><circle cx="46.7" cy="42.5" r="1.3"/><circle cx="17.0" cy="45.0" r="1.2"/><circle cx="73.6" cy="41.5" r="1.4"/><circle cx="82.0" cy="44.0" r="1.1"/><circle cx="85.0" cy="48.0" r="1.1"/><circle cx="27.0" cy="52.0" r="2.0"/><circle cx="29.0" cy="50.5" r="1.4"/><circle cx="44.6" cy="59.5" r="1.3"/><circle cx="42.5" cy="66.0" r="1.2"/><circle cx="44.6" cy="70.0" r="1.1"/><circle cx="48.0" cy="67.7" r="1.1"/><circle cx="75.8" cy="64.6" r="1.0"/><circle cx="2.0" cy="77.6" r="1.0"/><circle cx="66.8" cy="81.6" r="1.0"/><circle cx="0.7" cy="13.9" r="1.4"/><circle cx="17.0" cy="56.0" r="1.2"/><circle cx="92.0" cy="28.0" r="1.1"/><circle cx="41.0" cy="25.0" r="1.1"/></g><g fill="#e6ee1c"><circle cx="63.4" cy="35.4" r="1.1"/><circle cx="70.0" cy="38.0" r="1.1"/><circle cx="84.3" cy="34.0" r="1.1"/><circle cx="28.7" cy="44.3" r="1.1"/><circle cx="14.2" cy="34.4" r="1.1"/><circle cx="74.4" cy="43.0" r="1.1"/><circle cx="60.2" cy="28.3" r="1.1"/><circle cx="0.5" cy="33.0" r="1.1"/></g></svg></div>
<div class="th" style="left:301px;top:0"><svg style="left:0;top:0" width="96" height="96" viewBox="0 0 96 96"><g filter="url(#tf3)"><rect x="-12" y="-12" width="120" height="120" fill="#595647"/><rect x="-12" y="-12.0" width="120" height="32.0" fill="#595647"/><rect x="-12" y="20.0" width="120" height="48.0" fill="#4a5636"/><rect x="-12" y="68.0" width="120" height="12.0" fill="#484f33"/><rect x="-12" y="80.0" width="120" height="10.0" fill="#2f3027"/><rect x="-12" y="90.0" width="120" height="18.0" fill="#54524b"/><ellipse cx="27.0" cy="46.0" rx="6.0" ry="16.0" fill="#545340"/><ellipse cx="68.0" cy="36.0" rx="6.0" ry="10.0" fill="#545340"/><ellipse cx="50.0" cy="28.0" rx="40.0" ry="4.0" fill="#3d372e"/><ellipse cx="20.0" cy="8.0" rx="20.0" ry="6.0" fill="#4b5339"/><ellipse cx="70.0" cy="10.0" rx="20.0" ry="6.0" fill="#444c32"/><ellipse cx="50.0" cy="74.0" rx="20.0" ry="5.0" fill="#565939"/><ellipse cx="30.0" cy="88.0" rx="16.0" ry="5.0" fill="#2a2b23"/><ellipse cx="82.0" cy="88.0" rx="12.0" ry="5.0" fill="#2a2b23"/></g><g fill="#f411f0"><circle cx="12.0" cy="18.8" r="3.4"/><circle cx="8.0" cy="19.0" r="2.0"/><circle cx="3.5" cy="27.0" r="2.0"/><circle cx="9.0" cy="29.0" r="2.2"/><circle cx="15.0" cy="30.0" r="2.4"/><circle cx="19.8" cy="29.0" r="1.6"/><circle cx="5.7" cy="36.0" r="1.8"/><circle cx="1.0" cy="24.0" r="1.6"/><circle cx="3.0" cy="51.0" r="3.0"/><circle cx="8.0" cy="52.0" r="2.8"/><circle cx="12.0" cy="53.0" r="2.2"/><circle cx="5.0" cy="56.0" r="2.0"/><circle cx="3.5" cy="62.0" r="2.2"/><circle cx="22.7" cy="61.8" r="1.8"/><circle cx="3.5" cy="78.0" r="2.0"/><circle cx="4.0" cy="75.0" r="1.2"/><circle cx="19.0" cy="45.0" r="1.4"/><circle cx="21.5" cy="44.0" r="1.4"/><circle cx="10.0" cy="44.0" r="1.6"/><circle cx="6.0" cy="41.0" r="1.4"/><circle cx="13.0" cy="58.0" r="1.4"/><circle cx="20.0" cy="50.0" r="1.2"/><circle cx="36.8" cy="22.4" r="3.4"/><circle cx="44.6" cy="18.0" r="2.6"/><circle cx="46.0" cy="23.0" r="1.8"/><circle cx="51.0" cy="20.0" r="1.8"/><circle cx="55.0" cy="24.0" r="1.6"/><circle cx="60.2" cy="26.6" r="3.0"/><circle cx="59.5" cy="33.7" r="2.2"/><circle cx="31.0" cy="31.3" r="2.4"/><circle cx="65.0" cy="42.0" r="2.2"/><circle cx="63.7" cy="49.0" r="2.0"/><circle cx="31.9" cy="44.0" r="1.8"/><circle cx="36.0" cy="45.0" r="1.6"/><circle cx="41.8" cy="58.5" r="1.8"/><circle cx="43.0" cy="62.7" r="1.8"/><circle cx="38.0" cy="65.0" r="1.6"/><circle cx="43.0" cy="68.0" r="1.6"/><circle cx="55.0" cy="68.4" r="2.6"/><circle cx="52.0" cy="66.0" r="1.6"/><circle cx="59.5" cy="55.0" r="1.8"/><circle cx="48.0" cy="62.7" r="1.3"/><circle cx="57.0" cy="52.0" r="1.3"/><circle cx="85.0" cy="31.0" r="2.8"/><circle cx="90.6" cy="27.0" r="1.6"/><circle cx="91.0" cy="34.0" r="1.8"/><circle cx="77.0" cy="47.0" r="2.4"/><circle cx="74.0" cy="47.0" r="1.6"/><circle cx="69.4" cy="55.7" r="1.8"/><circle cx="76.5" cy="54.0" r="1.6"/><circle cx="82.8" cy="57.0" r="2.2"/><circle cx="78.6" cy="61.0" r="2.0"/><circle cx="70.0" cy="63.5" r="1.6"/><circle cx="87.0" cy="62.0" r="2.0"/><circle cx="85.7" cy="66.0" r="2.2"/><circle cx="92.8" cy="69.8" r="1.8"/><circle cx="77.9" cy="75.5" r="2.6"/><circle cx="90.0" cy="74.8" r="1.6"/><circle cx="93.5" cy="79.0" r="1.8"/><circle cx="67.0" cy="60.0" r="1.4"/><circle cx="51.4" cy="37.3" r="2.0"/><circle cx="45.6" cy="34.3" r="1.3"/><circle cx="43.8" cy="36.3" r="1.6"/><circle cx="51.7" cy="33.2" r="1.3"/><circle cx="49.3" cy="39.9" r="2.1"/><circle cx="49.8" cy="38.6" r="1.3"/><circle cx="50.0" cy="42.2" r="1.4"/><circle cx="40.2" cy="41.7" r="2.0"/><circle cx="39.9" cy="41.6" r="1.8"/><circle cx="47.9" cy="34.5" r="1.6"/><circle cx="39.2" cy="34.2" r="1.9"/><circle cx="42.0" cy="38.6" r="1.5"/><circle cx="47.7" cy="45.8" r="2.2"/><circle cx="50.6" cy="34.4" r="2.0"/><circle cx="44.4" cy="43.3" r="1.4"/><circle cx="42.5" cy="39.9" r="1.3"/><circle cx="48.2" cy="36.8" r="2.1"/><circle cx="45.3" cy="35.7" r="1.7"/><circle cx="53.9" cy="37.8" r="1.8"/><circle cx="46.9" cy="31.3" r="1.5"/><circle cx="40.1" cy="36.1" r="1.6"/><circle cx="48.2" cy="33.2" r="2.0"/><circle cx="50.9" cy="40.1" r="1.2"/><circle cx="41.5" cy="32.0" r="1.8"/><circle cx="40.2" cy="35.5" r="1.5"/><circle cx="41.4" cy="42.0" r="1.9"/><circle cx="86.0" cy="49.8" r="1.6"/><circle cx="84.4" cy="43.8" r="1.6"/><circle cx="86.8" cy="39.2" r="1.8"/><circle cx="92.3" cy="45.5" r="2.2"/><circle cx="90.5" cy="50.4" r="2.1"/><circle cx="93.6" cy="47.3" r="2.2"/><circle cx="93.7" cy="43.7" r="1.6"/><circle cx="86.6" cy="51.5" r="1.3"/><circle cx="94.5" cy="47.3" r="1.9"/><circle cx="91.0" cy="50.5" r="1.5"/><circle cx="91.2" cy="42.9" r="2.0"/><circle cx="88.9" cy="41.5" r="1.5"/><circle cx="85.2" cy="45.3" r="1.9"/><circle cx="86.5" cy="52.3" r="1.7"/><circle cx="92.5" cy="51.3" r="2.2"/><circle cx="87.1" cy="40.6" r="2.2"/><circle cx="89.5" cy="45.7" r="1.7"/><circle cx="92.4" cy="46.5" r="1.5"/><circle cx="84.2" cy="47.6" r="2.1"/><circle cx="89.0" cy="46.9" r="2.3"/><circle cx="89.9" cy="40.2" r="1.3"/><circle cx="94.5" cy="48.5" r="1.8"/><circle cx="87.4" cy="59.9" r="2.0"/><circle cx="85.0" cy="61.2" r="1.5"/><circle cx="79.2" cy="66.1" r="2.1"/><circle cx="84.2" cy="59.4" r="1.7"/><circle cx="85.7" cy="68.6" r="1.9"/><circle cx="78.9" cy="63.5" r="2.3"/><circle cx="85.8" cy="63.3" r="1.5"/><circle cx="80.2" cy="60.8" r="1.5"/><circle cx="87.7" cy="62.3" r="2.0"/><circle cx="87.0" cy="65.0" r="1.2"/></g><g fill="#e6ee1c"><circle cx="0.5" cy="26.0" r="1.1"/><circle cx="12.0" cy="33.0" r="1.1"/><circle cx="12.0" cy="41.0" r="1.1"/><circle cx="5.0" cy="48.0" r="1.1"/><circle cx="10.0" cy="49.0" r="1.1"/><circle cx="8.0" cy="54.0" r="1.1"/><circle cx="11.0" cy="56.0" r="1.1"/><circle cx="39.0" cy="18.0" r="1.1"/><circle cx="45.0" cy="23.5" r="1.1"/><circle cx="44.0" cy="30.0" r="1.1"/><circle cx="39.0" cy="40.5" r="1.1"/><circle cx="50.0" cy="34.0" r="1.1"/><circle cx="54.0" cy="37.0" r="1.1"/><circle cx="52.5" cy="50.0" r="1.1"/><circle cx="55.0" cy="52.5" r="1.1"/><circle cx="54.5" cy="58.5" r="1.1"/><circle cx="45.0" cy="63.5" r="1.1"/><circle cx="82.0" cy="42.0" r="1.1"/><circle cx="88.0" cy="43.0" r="1.1"/><circle cx="73.0" cy="56.0" r="1.1"/><circle cx="77.0" cy="68.0" r="1.1"/><circle cx="87.5" cy="72.5" r="1.1"/><circle cx="69.0" cy="65.0" r="1.1"/><circle cx="0.3" cy="74.0" r="1.1"/></g></svg></div>
<div class="th" style="left:402px;top:0"><svg style="left:0;top:0" width="96" height="96" viewBox="0 0 96 96"><g filter="url(#tf0)"><rect x="-12" y="-12" width="120" height="120" fill="#2b3022"/><rect x="-12" y="-12.0" width="120" height="18.0" fill="#2b3022"/><rect x="-12" y="6.0" width="120" height="20.0" fill="#5c5c40"/><rect x="-12" y="26.0" width="120" height="22.0" fill="#525838"/><rect x="-12" y="48.0" width="120" height="14.0" fill="#666246"/><rect x="-12" y="62.0" width="120" height="6.0" fill="#3c3b30"/><rect x="-12" y="68.0" width="120" height="40.0" fill="#5e5b50"/><ellipse cx="38.0" cy="42.0" rx="13.0" ry="26.0" fill="#495733"/><ellipse cx="40.0" cy="72.0" rx="8.0" ry="16.0" fill="#495733"/><ellipse cx="85.0" cy="36.0" rx="12.0" ry="14.0" fill="#495733"/><ellipse cx="5.0" cy="30.0" rx="6.0" ry="16.0" fill="#495134"/><ellipse cx="60.0" cy="22.0" rx="18.0" ry="8.0" fill="#565939"/><ellipse cx="42.0" cy="90.0" rx="12.0" ry="6.0" fill="#2a2b23"/><ellipse cx="70.0" cy="58.0" rx="20.0" ry="5.0" fill="#565939"/><ellipse cx="15.0" cy="84.0" rx="12.0" ry="6.0" fill="#55573f"/></g><g fill="#f411f0"><circle cx="4.2" cy="14.6" r="1.4"/><circle cx="5.7" cy="19.5" r="1.3"/><circle cx="22.0" cy="18.0" r="1.5"/><circle cx="34.7" cy="16.7" r="1.4"/><circle cx="14.0" cy="28.7" r="2.0"/><circle cx="12.5" cy="31.5" r="1.4"/><circle cx="31.0" cy="23.0" r="1.2"/><circle cx="34.7" cy="22.8" r="1.4"/><circle cx="38.0" cy="28.7" r="1.6"/><circle cx="40.0" cy="30.9" r="1.5"/><circle cx="36.0" cy="30.0" r="1.2"/><circle cx="48.9" cy="25.0" r="1.5"/><circle cx="54.5" cy="28.0" r="1.3"/><circle cx="22.0" cy="29.7" r="1.2"/><circle cx="29.7" cy="30.6" r="1.2"/><circle cx="34.7" cy="38.0" r="1.5"/><circle cx="55.0" cy="37.0" r="1.3"/><circle cx="83.5" cy="22.8" r="1.4"/><circle cx="87.0" cy="23.0" r="1.3"/><circle cx="72.0" cy="30.0" r="1.5"/><circle cx="83.5" cy="29.0" r="1.3"/><circle cx="87.8" cy="35.0" r="1.2"/><circle cx="65.9" cy="45.0" r="1.3"/><circle cx="68.7" cy="45.0" r="1.3"/><circle cx="85.0" cy="45.0" r="1.2"/><circle cx="80.7" cy="44.0" r="1.1"/><circle cx="37.5" cy="48.0" r="1.3"/><circle cx="53.8" cy="48.0" r="1.4"/><circle cx="56.6" cy="51.4" r="1.3"/><circle cx="2.8" cy="50.7" r="1.6"/><circle cx="44.6" cy="58.8" r="1.6"/><circle cx="30.4" cy="68.8" r="1.2"/><circle cx="33.7" cy="79.7" r="1.3"/><circle cx="29.0" cy="48.6" r="1.1"/><circle cx="47.4" cy="44.0" r="1.2"/><circle cx="0.5" cy="33.0" r="1.0"/><circle cx="5.0" cy="46.0" r="1.0"/></g><g fill="#e6ee1c"><circle cx="43.6" cy="43.0" r="1.1"/><circle cx="49.3" cy="47.2" r="1.1"/><circle cx="41.4" cy="51.4" r="1.1"/><circle cx="85.0" cy="35.4" r="1.1"/><circle cx="25.5" cy="23.5" r="1.1"/><circle cx="39.7" cy="54.2" r="1.1"/></g></svg></div>
<div class="th" style="left:502px;top:0"><svg style="left:0;top:0" width="96" height="96" viewBox="0 0 96 96"><g filter="url(#tf1)"><rect x="-12" y="-12" width="120" height="120" fill="#474d39"/><rect x="-12" y="-12.0" width="120" height="36.0" fill="#474d39"/><rect x="-12" y="24.0" width="120" height="42.0" fill="#4a5636"/><rect x="-12" y="66.0" width="120" height="12.0" fill="#30322a"/><rect x="-12" y="78.0" width="120" height="30.0" fill="#5b5851"/><ellipse cx="22.0" cy="48.0" rx="5.0" ry="14.0" fill="#484934"/><ellipse cx="25.0" cy="16.0" rx="10.0" ry="8.0" fill="#485036"/><ellipse cx="75.0" cy="8.0" rx="12.0" ry="8.0" fill="#3c462e"/><ellipse cx="50.0" cy="70.0" rx="30.0" ry="5.0" fill="#53563c"/><ellipse cx="40.0" cy="84.0" rx="14.0" ry="6.0" fill="#3a3a32"/><ellipse cx="80.0" cy="82.0" rx="12.0" ry="5.0" fill="#3a3a32"/></g><g fill="#f411f0"><circle cx="5.0" cy="33.4" r="2.8"/><circle cx="10.0" cy="30.6" r="1.6"/><circle cx="6.4" cy="41.5" r="2.2"/><circle cx="11.3" cy="40.0" r="2.0"/><circle cx="5.7" cy="50.0" r="3.0"/><circle cx="13.5" cy="52.0" r="2.0"/><circle cx="12.0" cy="57.8" r="2.0"/><circle cx="1.4" cy="60.6" r="2.0"/><circle cx="10.0" cy="63.5" r="2.2"/><circle cx="15.6" cy="62.0" r="1.8"/><circle cx="2.0" cy="68.8" r="2.2"/><circle cx="0.7" cy="43.6" r="1.4"/><circle cx="12.0" cy="46.0" r="1.4"/><circle cx="1.0" cy="33.0" r="1.6"/><circle cx="46.7" cy="24.5" r="3.6"/><circle cx="55.2" cy="18.0" r="2.0"/><circle cx="55.2" cy="21.0" r="1.8"/><circle cx="28.3" cy="32.6" r="2.0"/><circle cx="33.3" cy="30.9" r="1.6"/><circle cx="36.0" cy="35.0" r="1.8"/><circle cx="41.0" cy="35.8" r="2.6"/><circle cx="29.0" cy="40.0" r="2.6"/><circle cx="46.7" cy="41.5" r="3.0"/><circle cx="50.0" cy="40.0" r="1.8"/><circle cx="54.5" cy="42.0" r="2.4"/><circle cx="58.8" cy="38.0" r="1.8"/><circle cx="37.5" cy="47.0" r="3.4"/><circle cx="32.6" cy="46.7" r="1.4"/><circle cx="42.5" cy="52.0" r="1.6"/><circle cx="35.4" cy="59.0" r="2.2"/><circle cx="38.0" cy="58.0" r="1.6"/><circle cx="43.0" cy="59.0" r="1.8"/><circle cx="29.0" cy="64.9" r="1.8"/><circle cx="33.3" cy="63.5" r="1.6"/><circle cx="37.5" cy="64.0" r="1.8"/><circle cx="28.0" cy="68.4" r="1.6"/><circle cx="36.0" cy="71.0" r="1.6"/><circle cx="48.0" cy="64.9" r="1.4"/><circle cx="52.4" cy="68.4" r="1.8"/><circle cx="54.5" cy="62.7" r="1.4"/><circle cx="50.3" cy="59.0" r="1.4"/><circle cx="59.0" cy="44.0" r="1.3"/><circle cx="65.0" cy="33.7" r="3.0"/><circle cx="71.5" cy="32.0" r="2.0"/><circle cx="82.9" cy="32.0" r="2.8"/><circle cx="87.0" cy="23.0" r="2.0"/><circle cx="91.4" cy="24.5" r="1.8"/><circle cx="94.0" cy="28.7" r="1.8"/><circle cx="85.7" cy="26.0" r="1.6"/><circle cx="93.5" cy="35.8" r="1.8"/><circle cx="88.5" cy="34.0" r="1.6"/><circle cx="85.0" cy="38.7" r="1.6"/><circle cx="84.0" cy="43.0" r="1.6"/><circle cx="77.9" cy="42.0" r="1.6"/><circle cx="73.6" cy="45.7" r="2.0"/><circle cx="79.0" cy="46.5" r="1.6"/><circle cx="68.7" cy="46.0" r="1.8"/><circle cx="68.0" cy="50.7" r="2.0"/><circle cx="63.7" cy="52.8" r="2.6"/><circle cx="87.8" cy="50.0" r="1.3"/><circle cx="92.0" cy="48.6" r="1.3"/><circle cx="82.0" cy="56.0" r="2.0"/><circle cx="85.0" cy="61.0" r="2.8"/><circle cx="88.0" cy="62.0" r="1.8"/><circle cx="69.4" cy="61.7" r="1.8"/><circle cx="95.0" cy="70.5" r="1.2"/><circle cx="90.0" cy="41.0" r="1.3"/></g><g fill="#e6ee1c"><circle cx="11.0" cy="40.0" r="1.1"/><circle cx="12.5" cy="43.0" r="1.1"/><circle cx="12.5" cy="48.0" r="1.1"/><circle cx="15.0" cy="57.0" r="1.1"/><circle cx="17.0" cy="63.0" r="1.1"/><circle cx="1.5" cy="59.0" r="1.1"/><circle cx="43.0" cy="36.0" r="1.1"/><circle cx="55.0" cy="38.0" r="1.1"/><circle cx="59.0" cy="36.0" r="1.1"/><circle cx="50.0" cy="47.0" r="1.1"/><circle cx="44.0" cy="54.5" r="1.1"/><circle cx="32.0" cy="61.0" r="1.1"/><circle cx="36.0" cy="70.5" r="1.1"/><circle cx="50.0" cy="60.0" r="1.1"/><circle cx="55.0" cy="66.0" r="1.1"/><circle cx="60.0" cy="32.5" r="1.1"/><circle cx="69.5" cy="31.5" r="1.1"/><circle cx="87.5" cy="26.5" r="1.1"/><circle cx="81.0" cy="36.0" r="1.1"/><circle cx="82.0" cy="42.5" r="1.1"/><circle cx="90.5" cy="32.5" r="1.1"/><circle cx="17.0" cy="63.5" r="1.1"/></g></svg></div>
<div class="th" style="left:603px;top:0"><svg style="left:0;top:0" width="96" height="96" viewBox="0 0 96 96"><g filter="url(#tf2)"><rect x="-12" y="-12" width="120" height="120" fill="#535445"/><rect x="-12" y="-12.0" width="120" height="34.0" fill="#535445"/><rect x="-12" y="22.0" width="120" height="48.0" fill="#485538"/><rect x="-12" y="70.0" width="120" height="9.0" fill="#5a5b45"/><rect x="-12" y="79.0" width="120" height="10.0" fill="#2b2c24"/><rect x="-12" y="89.0" width="120" height="19.0" fill="#595750"/><ellipse cx="30.0" cy="10.0" rx="22.0" ry="7.0" fill="#48503b"/><ellipse cx="75.0" cy="12.0" rx="18.0" ry="6.0" fill="#4c4d45"/><ellipse cx="50.0" cy="24.0" rx="44.0" ry="3.0" fill="#3a352c"/><ellipse cx="58.0" cy="66.0" rx="14.0" ry="5.0" fill="#5f5c4b"/><ellipse cx="20.0" cy="84.0" rx="14.0" ry="4.0" fill="#2a2b23"/><ellipse cx="70.0" cy="84.0" rx="16.0" ry="4.0" fill="#2a2b23"/></g><g fill="#f411f0"><circle cx="26.0" cy="23.5" r="1.8"/><circle cx="26.0" cy="26.5" r="1.8"/><circle cx="26.0" cy="29.5" r="1.8"/><circle cx="31.0" cy="28.7" r="2.2"/><circle cx="2.8" cy="30.0" r="1.8"/><circle cx="14.0" cy="34.0" r="1.6"/><circle cx="17.0" cy="33.0" r="1.6"/><circle cx="19.5" cy="31.5" r="1.4"/><circle cx="10.0" cy="35.0" r="1.4"/><circle cx="6.4" cy="34.8" r="1.4"/><circle cx="1.0" cy="34.0" r="1.2"/><circle cx="40.0" cy="26.0" r="1.6"/><circle cx="42.0" cy="29.0" r="1.2"/><circle cx="48.9" cy="30.6" r="1.6"/><circle cx="60.0" cy="28.0" r="2.6"/><circle cx="63.0" cy="30.0" r="1.8"/><circle cx="65.0" cy="31.6" r="1.8"/><circle cx="66.0" cy="34.0" r="1.4"/><circle cx="68.0" cy="24.5" r="1.6"/><circle cx="68.0" cy="27.0" r="1.3"/><circle cx="77.0" cy="27.0" r="1.4"/><circle cx="83.5" cy="30.9" r="1.8"/><circle cx="90.6" cy="35.8" r="1.8"/><circle cx="93.5" cy="39.0" r="1.8"/><circle cx="82.9" cy="37.0" r="1.6"/><circle cx="82.0" cy="42.0" r="2.2"/><circle cx="89.0" cy="43.0" r="1.6"/><circle cx="92.0" cy="43.0" r="1.4"/><circle cx="83.5" cy="48.6" r="2.4"/><circle cx="86.0" cy="51.0" r="1.6"/><circle cx="74.4" cy="50.0" r="1.6"/><circle cx="65.9" cy="44.0" r="1.6"/><circle cx="66.0" cy="47.0" r="1.6"/><circle cx="66.0" cy="51.0" r="1.6"/><circle cx="69.4" cy="54.0" r="2.6"/><circle cx="67.0" cy="61.0" r="2.0"/><circle cx="79.0" cy="66.0" r="1.8"/><circle cx="82.0" cy="65.0" r="1.4"/><circle cx="84.0" cy="62.7" r="1.4"/><circle cx="87.8" cy="69.4" r="1.8"/><circle cx="84.0" cy="58.0" r="1.3"/><circle cx="95.0" cy="50.0" r="1.3"/><circle cx="77.0" cy="51.0" r="1.2"/><circle cx="80.0" cy="53.0" r="1.2"/><circle cx="73.0" cy="58.0" r="1.0"/><circle cx="34.7" cy="50.0" r="2.4"/><circle cx="37.0" cy="48.0" r="1.4"/><circle cx="43.0" cy="57.0" r="2.6"/><circle cx="46.0" cy="56.0" r="1.6"/><circle cx="50.0" cy="46.5" r="1.4"/><circle cx="53.8" cy="53.5" r="1.6"/><circle cx="51.0" cy="50.7" r="1.4"/><circle cx="54.0" cy="50.0" r="1.2"/><circle cx="48.0" cy="39.0" r="1.4"/><circle cx="56.0" cy="38.0" r="1.4"/><circle cx="35.4" cy="35.8" r="1.6"/><circle cx="38.0" cy="36.0" r="1.4"/><circle cx="44.0" cy="36.0" r="1.3"/><circle cx="49.0" cy="36.0" r="1.3"/><circle cx="23.4" cy="51.4" r="1.6"/><circle cx="28.3" cy="54.0" r="1.3"/><circle cx="13.5" cy="55.0" r="1.2"/><circle cx="14.0" cy="48.6" r="1.4"/><circle cx="8.0" cy="48.6" r="1.2"/><circle cx="16.0" cy="43.6" r="1.6"/><circle cx="20.0" cy="38.0" r="1.4"/><circle cx="24.0" cy="38.0" r="1.2"/><circle cx="31.0" cy="41.0" r="1.3"/><circle cx="41.0" cy="46.0" r="1.2"/><circle cx="59.0" cy="42.0" r="1.2"/><circle cx="20.5" cy="63.0" r="1.8"/><circle cx="18.4" cy="67.0" r="1.6"/><circle cx="22.0" cy="69.4" r="1.6"/><circle cx="27.0" cy="62.0" r="1.4"/><circle cx="25.5" cy="60.0" r="1.2"/><circle cx="2.0" cy="59.0" r="1.6"/><circle cx="4.0" cy="61.0" r="1.4"/><circle cx="1.4" cy="68.4" r="2.0"/><circle cx="5.0" cy="70.0" r="2.0"/><circle cx="35.0" cy="74.8" r="1.8"/><circle cx="0.7" cy="55.0" r="1.4"/><circle cx="8.0" cy="53.0" r="1.2"/><circle cx="5.0" cy="47.0" r="1.0"/><circle cx="10.0" cy="41.0" r="1.2"/><circle cx="70.0" cy="37.0" r="1.2"/><circle cx="75.0" cy="40.0" r="1.2"/></g><g fill="#e6ee1c"><circle cx="4.5" cy="43.5" r="1.1"/><circle cx="12.0" cy="41.0" r="1.1"/><circle cx="21.0" cy="42.0" r="1.1"/><circle cx="23.0" cy="49.5" r="1.1"/><circle cx="28.0" cy="45.5" r="1.1"/><circle cx="8.5" cy="58.5" r="1.1"/><circle cx="18.5" cy="47.0" r="1.1"/><circle cx="32.0" cy="36.0" r="1.1"/><circle cx="37.0" cy="44.0" r="1.1"/><circle cx="45.5" cy="44.5" r="1.1"/><circle cx="46.0" cy="51.5" r="1.1"/><circle cx="50.0" cy="42.0" r="1.1"/><circle cx="52.5" cy="43.0" r="1.1"/><circle cx="44.0" cy="36.5" r="1.1"/><circle cx="36.5" cy="29.5" r="1.1"/><circle cx="69.5" cy="40.5" r="1.1"/><circle cx="66.5" cy="46.5" r="1.1"/><circle cx="71.5" cy="57.5" r="1.1"/><circle cx="87.5" cy="51.0" r="1.1"/><circle cx="55.0" cy="44.0" r="1.1"/><circle cx="40.0" cy="38.5" r="1.1"/></g></svg></div>
<div class="th" style="left:703px;top:0"><svg style="left:0;top:0" width="96" height="96" viewBox="0 0 96 96"><g filter="url(#tf3)"><rect x="-12" y="-12" width="120" height="120" fill="#505345"/><rect x="-12" y="-12.0" width="120" height="36.0" fill="#505345"/><rect x="-12" y="24.0" width="120" height="42.0" fill="#485538"/><rect x="-12" y="66.0" width="120" height="10.0" fill="#555540"/><rect x="-12" y="76.0" width="120" height="8.0" fill="#3a3b30"/><rect x="-12" y="84.0" width="120" height="24.0" fill="#5a5850"/><ellipse cx="15.0" cy="26.0" rx="14.0" ry="5.0" fill="#2a2d22"/><ellipse cx="85.0" cy="52.0" rx="10.0" ry="12.0" fill="#54543e"/><ellipse cx="20.0" cy="10.0" rx="16.0" ry="7.0" fill="#48503b"/><ellipse cx="60.0" cy="8.0" rx="20.0" ry="6.0" fill="#4a4d45"/><ellipse cx="40.0" cy="88.0" rx="14.0" ry="5.0" fill="#3a3a32"/><ellipse cx="62.0" cy="70.0" rx="14.0" ry="5.0" fill="#565939"/></g><g fill="#f411f0"><circle cx="36.0" cy="15.0" r="1.8"/><circle cx="39.0" cy="15.0" r="1.8"/><circle cx="42.0" cy="15.0" r="1.8"/><circle cx="48.0" cy="13.0" r="2.0"/><circle cx="60.2" cy="18.0" r="3.0"/><circle cx="58.0" cy="17.0" r="1.8"/><circle cx="62.0" cy="21.0" r="1.8"/><circle cx="67.0" cy="27.0" r="1.8"/><circle cx="73.0" cy="30.6" r="1.8"/><circle cx="77.0" cy="30.0" r="2.2"/><circle cx="75.8" cy="43.0" r="1.6"/><circle cx="64.4" cy="43.6" r="1.6"/><circle cx="67.0" cy="44.0" r="1.2"/><circle cx="6.4" cy="35.0" r="2.0"/><circle cx="10.0" cy="38.7" r="2.0"/><circle cx="5.7" cy="43.0" r="1.8"/><circle cx="9.2" cy="49.0" r="3.0"/><circle cx="5.5" cy="49.0" r="2.0"/><circle cx="12.5" cy="49.0" r="2.0"/><circle cx="14.9" cy="43.0" r="2.0"/><circle cx="17.5" cy="45.0" r="1.6"/><circle cx="19.8" cy="46.5" r="2.0"/><circle cx="24.8" cy="47.9" r="2.0"/><circle cx="29.7" cy="47.0" r="2.0"/><circle cx="33.3" cy="43.0" r="2.8"/><circle cx="23.4" cy="38.0" r="1.8"/><circle cx="37.5" cy="38.0" r="2.0"/><circle cx="27.6" cy="57.0" r="2.6"/><circle cx="25.5" cy="58.0" r="1.8"/><circle cx="30.0" cy="55.5" r="1.6"/><circle cx="37.5" cy="57.8" r="2.6"/><circle cx="47.4" cy="60.0" r="3.0"/><circle cx="45.0" cy="57.0" r="2.0"/><circle cx="50.0" cy="58.0" r="1.8"/><circle cx="37.5" cy="64.6" r="1.4"/><circle cx="44.6" cy="68.4" r="2.4"/><circle cx="48.0" cy="74.8" r="1.6"/><circle cx="51.0" cy="77.6" r="1.6"/><circle cx="54.5" cy="78.7" r="1.6"/><circle cx="10.6" cy="54.0" r="1.2"/><circle cx="1.4" cy="55.0" r="1.2"/><circle cx="0.3" cy="42.0" r="1.0"/><circle cx="39.0" cy="25.0" r="1.6"/><circle cx="41.0" cy="27.0" r="1.6"/><circle cx="43.0" cy="30.0" r="2.2"/><circle cx="46.0" cy="29.0" r="1.8"/><circle cx="49.0" cy="30.0" r="1.6"/><circle cx="52.0" cy="27.0" r="1.6"/><circle cx="55.0" cy="29.0" r="1.8"/><circle cx="57.0" cy="27.0" r="1.6"/><circle cx="61.0" cy="26.0" r="1.4"/><circle cx="62.0" cy="29.0" r="1.4"/><circle cx="50.1" cy="50.4" r="2.3"/><circle cx="47.0" cy="35.6" r="1.5"/><circle cx="55.2" cy="50.4" r="2.0"/><circle cx="50.0" cy="50.5" r="2.0"/><circle cx="53.5" cy="38.8" r="1.5"/><circle cx="52.4" cy="49.8" r="2.2"/><circle cx="49.7" cy="37.9" r="1.6"/><circle cx="52.8" cy="44.0" r="1.7"/><circle cx="52.4" cy="46.7" r="1.5"/><circle cx="43.5" cy="46.8" r="1.5"/><circle cx="46.2" cy="37.5" r="1.5"/><circle cx="47.9" cy="51.3" r="2.1"/><circle cx="49.2" cy="31.7" r="2.0"/><circle cx="48.8" cy="47.1" r="1.8"/><circle cx="44.5" cy="35.8" r="2.2"/><circle cx="52.3" cy="31.6" r="1.9"/><circle cx="47.1" cy="33.0" r="1.7"/><circle cx="52.2" cy="32.2" r="1.8"/><circle cx="47.3" cy="47.7" r="1.9"/><circle cx="44.8" cy="38.9" r="1.6"/><circle cx="49.5" cy="32.9" r="2.2"/><circle cx="50.9" cy="41.7" r="1.6"/><circle cx="49.7" cy="34.0" r="1.9"/><circle cx="49.8" cy="48.8" r="2.1"/><circle cx="46.4" cy="33.0" r="2.2"/><circle cx="56.5" cy="37.1" r="2.2"/><circle cx="56.2" cy="35.6" r="1.7"/><circle cx="45.5" cy="46.0" r="2.0"/><circle cx="56.5" cy="40.8" r="1.7"/><circle cx="52.5" cy="44.0" r="1.3"/><circle cx="50.1" cy="42.2" r="1.6"/><circle cx="47.4" cy="52.1" r="1.4"/><circle cx="56.3" cy="47.7" r="2.2"/><circle cx="44.1" cy="41.4" r="1.6"/><circle cx="46.6" cy="45.5" r="1.3"/><circle cx="57.4" cy="40.5" r="2.1"/><circle cx="53.8" cy="49.0" r="1.3"/><circle cx="49.5" cy="39.2" r="1.9"/><circle cx="54.3" cy="51.2" r="2.2"/><circle cx="43.2" cy="46.8" r="2.1"/><circle cx="53.3" cy="51.2" r="2.2"/><circle cx="49.8" cy="51.0" r="1.5"/><circle cx="55.3" cy="43.2" r="1.3"/><circle cx="52.7" cy="33.6" r="1.5"/></g><g fill="#e6ee1c"><circle cx="46.0" cy="14.5" r="1.1"/><circle cx="50.0" cy="18.5" r="1.1"/><circle cx="53.0" cy="23.0" r="1.1"/><circle cx="44.5" cy="25.5" r="1.1"/><circle cx="55.5" cy="26.5" r="1.1"/><circle cx="57.0" cy="38.5" r="1.1"/><circle cx="45.0" cy="41.0" r="1.1"/><circle cx="43.5" cy="46.0" r="1.1"/><circle cx="37.0" cy="49.0" r="1.1"/><circle cx="38.5" cy="51.5" r="1.1"/><circle cx="27.5" cy="52.0" r="1.1"/><circle cx="15.0" cy="51.0" r="1.1"/><circle cx="14.0" cy="55.5" r="1.1"/><circle cx="5.0" cy="45.0" r="1.1"/><circle cx="55.0" cy="47.0" r="1.1"/><circle cx="43.0" cy="55.5" r="1.1"/><circle cx="51.0" cy="55.0" r="1.1"/><circle cx="36.0" cy="33.5" r="1.1"/><circle cx="39.5" cy="24.5" r="1.1"/></g></svg></div>
</div>
<span class="t " style="left:589.20px;top:712.08px;font-size:14.20px;line-height:18px;color:#6b7280;font-weight:400;letter-spacing:0.010px;">10 images</span>
<span class="t " style="left:1251.00px;top:712.08px;font-size:14.20px;line-height:18px;color:#6706ce;font-weight:400;letter-spacing:0.359px;-webkit-text-stroke:0.30px #6706ce;">View All Images</span>
<svg style="left:1360px;top:716px" width="10" height="10" viewBox="0 0 10 10"><path d="M1 1 L4.8 5 L1 9 M5.2 1 L9 5 L5.2 9" stroke="#6706ce" stroke-width="1.3" fill="none"/></svg>
<div class="hr" style="left:565px;top:760px;width:830px"></div>
<span class="t " style="left:589.20px;top:786.08px;font-size:14.20px;line-height:18px;color:#6b7280;font-weight:400;letter-spacing:-0.166px;">TRAIN / TEST SPLIT</span>
<div class="card" style="left:589.0px;top:817px;width:252.5px;height:120px"></div>
<div class="card" style="left:853.0px;top:817px;width:252.5px;height:120px"></div>
<div class="card" style="left:1118.0px;top:817px;width:252.5px;height:120px"></div>
<span class="t " style="left:614.20px;top:843.75px;font-size:16.30px;line-height:21px;color:#6b7280;font-weight:400;letter-spacing:0.156px;">Training Set</span>
<div class="pill" style="left:760px;top:842px;width:56px;background:#8315f9"></div>
<span class="t " style="left:773.00px;top:845.26px;font-size:12.80px;line-height:17px;color:#ffffff;font-weight:700;letter-spacing:-0.713px;">100%</span>
<span class="t " style="left:613.20px;top:878.01px;font-size:24.50px;line-height:32px;color:#222c3b;font-weight:700;transform:scaleX(1.25);transform-origin:0 0;">10</span>
<span class="t " style="left:656.90px;top:891.15px;font-size:16.30px;line-height:21px;color:#6b7280;font-weight:400;letter-spacing:0.241px;">images</span>
<span class="t " style="left:879.00px;top:843.75px;font-size:16.30px;line-height:21px;color:#6b7280;font-weight:400;letter-spacing:0.255px;">Validation Set</span>
<div class="pill" style="left:1047px;top:842px;width:34px;background:#38bdf8"></div>
<span class="t " style="left:1059.80px;top:845.26px;font-size:12.80px;line-height:17px;color:#ffffff;font-weight:700;transform:scaleX(0.8);transform-origin:0 0;">%</span>
<span class="t " style="left:886.25px;top:878.15px;font-size:16.30px;line-height:21px;color:#6b7280;font-weight:400;letter-spacing:0.241px;">images</span>
<span class="t " style="left:1143.70px;top:843.75px;font-size:16.30px;line-height:21px;color:#6b7280;font-weight:400;letter-spacing:0.336px;">Testing Set</span>
<div class="pill" style="left:1311px;top:842px;width:35px;background:#fcd34d"></div>
<span class="t " style="left:1324.40px;top:845.26px;font-size:12.80px;line-height:17px;color:#8a4a12;font-weight:400;-webkit-text-stroke:0.25px #8a4a12;transform:scaleX(0.8);transform-origin:0 0;">%</span>
<span class="t " style="left:1151.00px;top:878.15px;font-size:16.30px;line-height:21px;color:#6b7280;font-weight:400;letter-spacing:0.241px;">images</span>
<div class="a" style="left:1356px;top:820px;width:60px;height:60px;border-radius:30px;background:#1a6ff4;box-shadow:0 2px 10px rgba(0,0,0,.18)"></div>
<svg style="left:1370px;top:838px" width="32" height="26" viewBox="0 0 32 26"><path d="M1 3.2 L28 0.8 L29.8 17.4 L19.8 18.2 L16.6 23.8 L13 18.8 L3 19.6 Z" fill="#fff"/></svg>
<div class="a" style="left:1423px;top:135px;width:17px;height:765px;background:#f1f1f1"></div>
<div class="a" style="left:1425px;top:145px;width:13px;height:487px;background:#c1c1c1"></div>
<svg style="left:1427px;top:135px" width="9" height="5" viewBox="0 0 9 5"><path d="M4.5 0 L9 4.6 H0 Z" fill="#a3a3a3"/></svg>
<svg style="left:1427px;top:889px" width="9" height="5" viewBox="0 0 9 5"><path d="M0 0 H9 L4.5 4.6 Z" fill="#505050"/></svg>
<div class="a" style="left:257px;top:897px;width:1166px;height:1px;background:#fff"></div>
<div class="a" style="left:0;top:898px;width:1440px;height:2px;background:#444"></div>
<div class="a" style="left:0;top:71px;width:1440px;height:64px;background:#1f2937"></div>
<svg style="left:33px;top:89px" width="28" height="28" viewBox="0 0 28 28"><circle cx="14" cy="14" r="14" fill="#fff"/><path d="M5.9 10.2 C8 6.8 12 5.2 15 5.5 C19 5.9 21 8.2 20.6 10.9 C20.2 13.6 17.5 15 15 16.8 C12.4 18.7 12.6 20.7 14.5 21.8 C17 23.2 20.4 21 22.5 17.9" fill="none" stroke="#6706ce" stroke-width="3.2" stroke-linecap="round"/><path d="M12.6 11.4 C9.6 12.2 6.8 14.8 6.5 17.6 C6.3 19.6 7.2 21.2 8.4 22.3" fill="none" stroke="#6706ce" stroke-width="3" stroke-linecap="round"/></svg>
<span class="t " style="left:71.90px;top:90.01px;font-size:20.60px;line-height:27px;color:#ffffff;font-weight:700;letter-spacing:-0.023px;-webkit-text-stroke:0.55px #ffffff;">roboflow</span>
<div class="a" style="left:183px;top:85px;width:79px;height:36px;border-radius:6px;background:#111827"></div>
<span class="t " style="left:195.20px;top:93.95px;font-size:14.30px;line-height:19px;color:#ffffff;font-weight:400;letter-spacing:0.392px;-webkit-text-stroke:0.30px #ffffff;">Projects</span>
<span class="t " style="left:290.00px;top:93.95px;font-size:14.30px;line-height:19px;color:#d1d5db;font-weight:400;letter-spacing:0.368px;-webkit-text-stroke:0.30px #d1d5db;">Universe</span>
<span class="t " style="left:389.00px;top:93.95px;font-size:14.30px;line-height:19px;color:#d1d5db;font-weight:400;letter-spacing:0.485px;-webkit-text-stroke:0.30px #d1d5db;">Documentation</span>
<span class="t " style="left:1322.80px;top:96.15px;font-size:14.00px;line-height:18px;color:#e5e7eb;font-weight:400;letter-spacing:-0.472px;">Chau Tran</span>
<svg style="left:1392px;top:101px" width="12" height="8" viewBox="0 0 12 8"><path d="M1.2 1.4 L6 6.2 L10.8 1.4" stroke="#e5e7eb" stroke-width="2" fill="none"/></svg>
<div class="a" style="left:0;top:0;width:1440px;height:34px;background:#023a40"></div>
<div class="a" style="left:0;top:34px;width:1440px;height:36px;background:#055a62"></div>
<div class="a" style="left:0;top:70px;width:1440px;height:1px;background:#3a8389"></div>
<svg style="left:0;top:0" width="260" height="34" viewBox="0 0 260 34"><path d="M0 34 C5 34 8 31 8 26 V8 C8 3.5 11.5 0 16 0 H240 C244.5 0 248 3.5 248 8 V26 C248 31 251 34 256 34 Z" fill="#055a62"/></svg>
<svg style="left:20px;top:9px" width="16" height="16" viewBox="0 0 28 28"><circle cx="14" cy="14" r="14" fill="#6706ce"/><path d="M5.9 10.2 C8 6.8 12 5.2 15 5.5 C19 5.9 21 8.2 20.6 10.9 C20.2 13.6 17.5 15 15 16.8 C12.4 18.7 12.6 20.7 14.5 21.8 C17 23.2 20.4 21 22.5 17.9" fill="none" stroke="#fff" stroke-width="3.2" stroke-linecap="round"/><path d="M12.6 11.4 C9.6 12.2 6.8 14.8 6.5 17.6 C6.3 19.6 7.2 21.2 8.4 22.3" fill="none" stroke="#fff" stroke-width="3" stroke-linecap="round"/></svg>
<div class="a" style="left:44.4px;top:8px;width:176px;height:18px;overflow:hidden;-webkit-mask-image:linear-gradient(90deg,#000 0,#000 150px,transparent 176px);mask-image:linear-gradient(90deg,#000 0,#000 150px,transparent 176px)"><span class="t " style="left:0.00px;top:0.77px;font-size:12.20px;line-height:16px;color:#ffffff;font-weight:400;letter-spacing:-0.239px;-webkit-text-stroke:0.15px #ffffff;">blueberries_moore_drone_6-16-2021 Dataset</span></div>
<svg style="left:228px;top:13px" width="9" height="9" viewBox="0 0 9 9"><path d="M0.7 0.7 L8.3 8.3 M8.3 0.7 L0.7 8.3" stroke="#fff" stroke-width="1.5" fill="none"/></svg>
<svg style="left:264px;top:11px" width="12" height="12" viewBox="0 0 12 12"><path d="M6 0.3 V11.7 M0.3 6 H11.7" stroke="#fff" stroke-width="1.7" fill="none"/></svg>
<svg style="left:1273px;top:10px" width="12" height="8" viewBox="0 0 12 8"><path d="M0.8 1 L6 6.6 L11.2 1" stroke="#fff" stroke-width="1.1" fill="none"/></svg>
<div class="a" style="left:1320px;top:14px;width:10px;height:1px;background:#fff"></div>
<svg style="left:1365px;top:9px" width="11" height="11" viewBox="0 0 11 11"><path d="M0.5 2.5 H8.5 V10.5 H0.5 Z M2.5 2.5 V0.5 H10.5 V8.5 H8.5" stroke="#fff" stroke-width="1" fill="none"/></svg>
<svg style="left:1412px;top:9px" width="10" height="10" viewBox="0 0 10 10"><path d="M0.3 0.3 L9.7 9.7 M9.7 0.3 L0.3 9.7" stroke="#fff" stroke-width="1.1" fill="none"/></svg>
<svg style="left:15px;top:45px" width="14" height="14" viewBox="0 0 14 14"><path d="M13.2 7 H1.6 M7 1.2 L1.2 7 L7 12.8" stroke="#fff" stroke-width="1.8" fill="none"/></svg>
<svg style="left:47px;top:45px" width="14" height="14" viewBox="0 0 14 14"><path d="M0.8 7 H12.4 M7 1.2 L12.8 7 L7 12.8" stroke="#5e979c" stroke-width="1.8" fill="none"/></svg>
<svg style="left:79px;top:45px" width="14" height="14" viewBox="0 0 14 14"><path d="M12.2 7 A5.3 5.3 0 1 1 10.6 3.2" stroke="#fff" stroke-width="1.8" fill="none"/><path d="M13.3 0.6 V6.2 H7.7 Z" fill="#fff"/></svg>
<div class="a" style="left:108px;top:38px;width:1224px;height:28px;border-radius:14px;background:#0d4850"></div>
<svg style="left:122px;top:46px" width="9" height="11" viewBox="0 0 9 11"><rect x="0.3" y="4.2" width="8.4" height="6.6" rx="1" fill="#c7d6d8"/><path d="M2.3 4.5 V3 A2.2 2.2 0 0 1 6.7 3 V4.5" stroke="#c7d6d8" stroke-width="1.3" fill="none"/></svg>
<span class="t " style="left:142.30px;top:43.15px;font-size:14.00px;line-height:18px;color:#ffffff;font-weight:400;letter-spacing:0.098px;">app.roboflow.com</span>
<span class="t " style="left:253.90px;top:43.15px;font-size:14.00px;line-height:18px;color:#a5c0c3;font-weight:400;letter-spacing:-0.023px;">/blueberries/blueberries_moore_drone_6-16-2021/1</span>
<svg style="left:1274px;top:44px" width="16" height="15" viewBox="0 0 16 15"><path d="M6.2 3.2 H3 A1.8 1.8 0 0 0 1.2 5 V11.8 A1.8 1.8 0 0 0 3 13.6 H10.2 A1.8 1.8 0 0 0 12 11.8 V10.4" stroke="#b9cdd0" stroke-width="1.3" fill="none"/><path d="M4.6 10.2 C5 6.8 7 5 10 4.8 V2 L14.8 6.2 L10 10.4 V7.6 C7.8 7.5 6 8.3 4.6 10.2 Z" stroke="#b9cdd0" stroke-width="1.2" fill="none" stroke-linejoin="round"/></svg>
<svg style="left:1306px;top:45px" width="16" height="15" viewBox="0 0 16 15"><path d="M8 1.3 L9.9 5.6 L14.6 6 L11 9.1 L12.1 13.7 L8 11.2 L3.9 13.7 L5 9.1 L1.4 6 L6.1 5.6 Z" stroke="#b9cdd0" stroke-width="1.4" fill="none" stroke-linejoin="round"/></svg>
<svg style="left:1346px;top:44px" width="16" height="16" viewBox="0 0 16 16"><path d="M6.2 2.6 A1.8 1.8 0 0 1 9.8 2.6 V3.4 H12.2 A1 1 0 0 1 13.2 4.4 V6.6 H13.9 A1.9 1.9 0 0 1 13.9 10.4 H13.2 V13.4 A1 1 0 0 1 12.2 14.4 H9.6 V13.6 A1.7 1.7 0 0 0 6.2 13.6 V14.4 H3.4 A1 1 0 0 1 2.4 13.4 V10.8 H3 A1.8 1.8 0 0 0 3 7.2 H2.4 V4.4 A1 1 0 0 1 3.4 3.4 H6.2 Z" fill="#fff"/></svg>
<div class="a" style="left:1375px;top:41px;width:22px;height:22px;border-radius:11px;background:#02503f"></div>
<span class="t " style="left:1382.20px;top:44.92px;font-size:11.20px;line-height:15px;color:#ffffff;font-weight:400;">C</span>
<svg style="left:1416px;top:45px" width="5" height="15" viewBox="0 0 5 15"><circle cx="2.5" cy="2.5" r="1.5" fill="#fff"/><circle cx="2.5" cy="7.5" r="1.5" fill="#fff"/><circle cx="2.5" cy="12.5" r="1.5" fill="#fff"/></svg>
</div></body></html>
